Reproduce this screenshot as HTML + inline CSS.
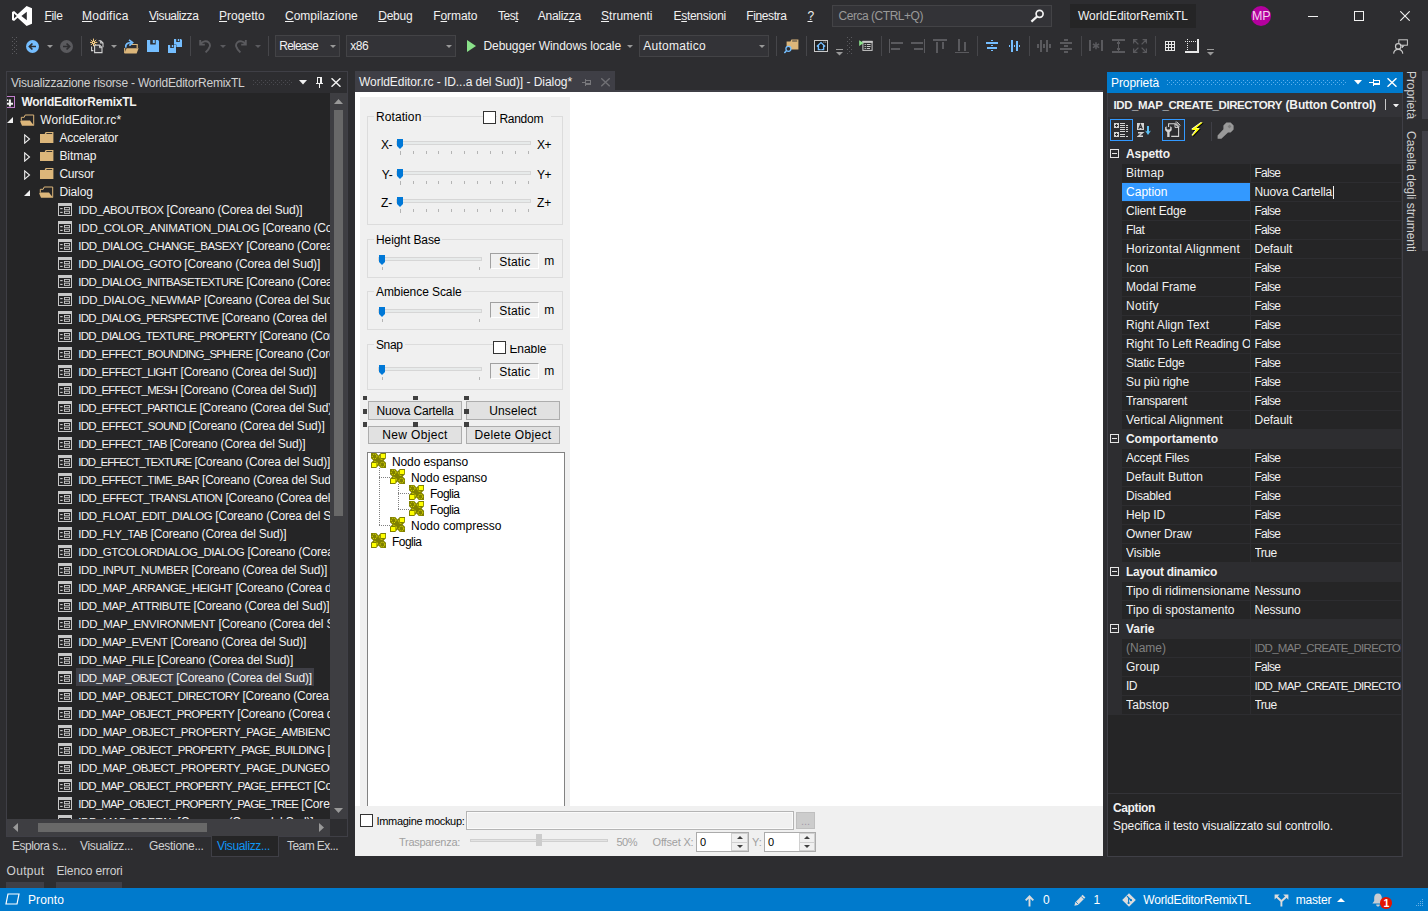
<!DOCTYPE html>
<html><head><meta charset="utf-8"><title>WorldEditorRemixTL</title><style>
html,body{margin:0;padding:0;}
body{width:1428px;height:911px;overflow:hidden;background:#2D2D30;font-family:"Liberation Sans",sans-serif;font-size:12px;position:relative;}
.a{position:absolute;}
.t{white-space:nowrap;}
u{text-decoration:underline;text-underline-offset:1px;}
</style></head><body>
<svg class="a" style="left:12px;top:6px;" width="20" height="20" viewBox="0 0 20 20"><path fill="#FFFFFF" fill-rule="evenodd" d="M14.6 0 L20 2.3 V17.7 L14.6 20 L5.6 11.8 L2.1 15.1 L0 14 V6 L2.1 4.9 L5.6 8.2 Z M14.8 5.8 L9.4 10 L14.8 14.2 Z M2 7.4 V12.6 L4.8 10 Z"/></svg>
<span class="a t" style="left:44.5px;top:7.0px;height:18px;line-height:18px;color:#F1F1F1;font-size:12px;letter-spacing:-0.340px;"><u>F</u>ile</span>
<span class="a t" style="left:82px;top:7.0px;height:18px;line-height:18px;color:#F1F1F1;font-size:12px;letter-spacing:0.264px;"><u>M</u>odifica</span>
<span class="a t" style="left:149px;top:7.0px;height:18px;line-height:18px;color:#F1F1F1;font-size:12px;letter-spacing:-0.443px;"><u>V</u>isualizza</span>
<span class="a t" style="left:219px;top:7.0px;height:18px;line-height:18px;color:#F1F1F1;font-size:12px;letter-spacing:0.041px;"><u>P</u>rogetto</span>
<span class="a t" style="left:285px;top:7.0px;height:18px;line-height:18px;color:#F1F1F1;font-size:12px;letter-spacing:0.007px;"><u>C</u>ompilazione</span>
<span class="a t" style="left:378.2px;top:7.0px;height:18px;line-height:18px;color:#F1F1F1;font-size:12px;letter-spacing:-0.215px;"><u>D</u>ebug</span>
<span class="a t" style="left:433.3px;top:7.0px;height:18px;line-height:18px;color:#F1F1F1;font-size:12px;letter-spacing:-0.103px;">F<u>o</u>rmato</span>
<span class="a t" style="left:498px;top:7.0px;height:18px;line-height:18px;color:#F1F1F1;font-size:12px;letter-spacing:-0.508px;">Tes<u>t</u></span>
<span class="a t" style="left:537.8px;top:7.0px;height:18px;line-height:18px;color:#F1F1F1;font-size:12px;letter-spacing:-0.272px;">Analiz<u>z</u>a</span>
<span class="a t" style="left:601px;top:7.0px;height:18px;line-height:18px;color:#F1F1F1;font-size:12px;letter-spacing:0.014px;"><u>S</u>trumenti</span>
<span class="a t" style="left:673.5px;top:7.0px;height:18px;line-height:18px;color:#F1F1F1;font-size:12px;letter-spacing:-0.289px;">E<u>s</u>tensioni</span>
<span class="a t" style="left:746.3px;top:7.0px;height:18px;line-height:18px;color:#F1F1F1;font-size:12px;letter-spacing:-0.397px;">Fi<u>n</u>estra</span>
<span class="a t" style="left:807.5px;top:7.0px;height:18px;line-height:18px;color:#F1F1F1;font-size:12px;letter-spacing:-1.688px;"><u>?</u></span>
<div class="a" style="left:832px;top:5px;width:220px;height:22px;background:#333337;border:1px solid #434346;box-sizing:border-box;"></div>
<span class="a t" style="left:838.5px;top:7.0px;height:18px;line-height:18px;color:#999999;font-size:12px;letter-spacing:-0.465px;">Cerca (CTRL+Q)</span>
<svg class="a" style="left:1030px;top:9px;" width="15" height="14" viewBox="0 0 15 14"><circle cx="9.6" cy="4.8" r="3.5" fill="none" stroke="#F1F1F1" stroke-width="1.7"/><path d="M7.2 7.4 L1.4 12.6" stroke="#F1F1F1" stroke-width="2.2" stroke-linecap="butt"/></svg>
<div class="a" style="left:1070px;top:4px;width:126px;height:24px;background:#252526;"></div>
<span class="a t" style="left:1078px;top:7.0px;height:18px;line-height:18px;color:#F1F1F1;font-size:12px;letter-spacing:-0.027px;">WorldEditorRemixTL</span>
<div class="a" style="left:1251px;top:6px;width:20px;height:20px;background:#B4009E;border-radius:10px;"></div>
<span class="a t" style="left:1252px;top:7.0px;height:18px;line-height:18px;color:#F3D2EC;font-size:12.5px;letter-spacing:-0.225px;">MP</span>
<div class="a" style="left:1308px;top:16px;width:10px;height:1px;background:#F1F1F1;"></div>
<div class="a" style="left:1354px;top:11px;width:10px;height:10px;border:1px solid #F1F1F1;box-sizing:border-box;"></div>
<svg class="a" style="left:1400px;top:11px;" width="10" height="10" viewBox="0 0 10 10"><path d="M0.3 0.3 L9.7 9.7 M9.7 0.3 L0.3 9.7" stroke="#F1F1F1" stroke-width="1.1"/></svg>
<svg class="a" style="left:12px;top:37px;" width="5" height="18" viewBox="0 0 5 18"><g fill="#5A5A5E"><rect x="0" y="0" width="1" height="1"/><rect x="4" y="0" width="1" height="1"/><rect x="2" y="2" width="1" height="1"/><rect x="0" y="4" width="1" height="1"/><rect x="4" y="4" width="1" height="1"/><rect x="2" y="6" width="1" height="1"/><rect x="0" y="8" width="1" height="1"/><rect x="4" y="8" width="1" height="1"/><rect x="2" y="10" width="1" height="1"/><rect x="0" y="12" width="1" height="1"/><rect x="4" y="12" width="1" height="1"/><rect x="2" y="14" width="1" height="1"/><rect x="0" y="16" width="1" height="1"/><rect x="4" y="16" width="1" height="1"/></g></svg>
<svg class="a" style="left:25.5px;top:39.5px;" width="13" height="13" viewBox="0 0 13 13"><circle cx="6.5" cy="6.5" r="6.5" fill="#75BEFF"/><path d="M10 6.5 H3.6 M6.4 3.5 L3.4 6.5 L6.4 9.5" stroke="#2D2D30" stroke-width="1.7" fill="none"/></svg>
<svg class="a" style="left:46.5px;top:45px;" width="6" height="3" viewBox="0 0 6 3"><path d="M0 0 H6 L3.0 3 Z" fill="#999999"/></svg>
<svg class="a" style="left:59.5px;top:39.5px;" width="13" height="13" viewBox="0 0 13 13"><circle cx="6.5" cy="6.5" r="6.5" fill="#5A5A5E"/><path d="M3 6.5 H9.4 M6.6 3.5 L9.6 6.5 L6.6 9.5" stroke="#2D2D30" stroke-width="1.7" fill="none"/></svg>
<div class="a" style="left:81px;top:36px;width:1px;height:20px;background:#46464A;"></div>
<svg class="a" style="left:90px;top:38px;" width="14" height="16" viewBox="0 0 14 16"><path d="M1.6 8.4 V12.6 H3.4 M8.6 2.7 H10.8 L13 4.9 V9.2 M10.7 2.9 V5 H12.8" fill="none" stroke="#D0D0D0" stroke-width="1.1"/><path d="M4.6 7.1 H9.6 L12 9.5 V14.6 H4.6 Z" fill="#38383C" stroke="#D0D0D0" stroke-width="1.1"/><path d="M9.5 7.3 V9.7 H11.8" fill="none" stroke="#D0D0D0" stroke-width="1"/><path d="M3.5 0.6 V8.2 M-0.3 4.4 H7.3 M0.9 1.8 L6.1 7 M6.1 1.8 L0.9 7" stroke="#F5CC84" stroke-width="1"/><circle cx="3.5" cy="4.4" r="1.6" fill="#F5CC84"/><circle cx="3.5" cy="4.4" r="0.6" fill="#2D2D30"/></svg>
<svg class="a" style="left:111px;top:45px;" width="6" height="3" viewBox="0 0 6 3"><path d="M0 0 H6 L3.0 3 Z" fill="#999999"/></svg>
<svg class="a" style="left:124px;top:39px;" width="15" height="15" viewBox="0 0 15 15"><path d="M0.7 9 V14 M7.4 5.5 H13.2 V9" fill="none" stroke="#DCB67A" stroke-width="1.2"/><path d="M2.6 9.2 H14.6 L12.6 14.4 H0.3 Z" fill="#DCB67A"/><path d="M1.8 8.6 C1.2 5.2 3.6 3.4 7.4 3.8" fill="none" stroke="#75BEFF" stroke-width="1.7"/><path d="M5 0.8 L8.6 3.6 L5.4 6.6" fill="none" stroke="#75BEFF" stroke-width="1.7"/></svg>
<svg class="a" style="left:147px;top:40px;" width="12" height="12" viewBox="0 0 12 12"><path d="M0 0 H11 L12 1 V12 H0 Z" fill="#75BEFF"/><rect x="3.2" y="0" width="5.5" height="4.5" fill="#2D2D30"/><rect x="5.8" y="0" width="2" height="3.1" fill="#75BEFF"/></svg>
<svg class="a" style="left:168px;top:39px;" width="14" height="14" viewBox="0 0 14 14"><path d="M6 0 H13 L14 1 V8 H6 Z" fill="#75BEFF"/><rect x="8.2" y="0" width="3.6" height="3" fill="#2D2D30"/><rect x="9.8" y="0" width="1.3" height="2.1" fill="#75BEFF"/><path d="M-0.4 5.6 H8.4 V14 H-0.4 Z" fill="#2D2D30"/><path d="M0 6 H8 V14 H0 Z" fill="#75BEFF"/><rect x="2.2" y="6" width="3.6" height="3" fill="#2D2D30"/><rect x="3.8" y="6" width="1.3" height="2.1" fill="#75BEFF"/></svg>
<div class="a" style="left:190px;top:36px;width:1px;height:20px;background:#46464A;"></div>
<svg class="a" style="left:198.5px;top:38.5px;" width="13" height="14" viewBox="0 0 13 14"><path d="M1.2 1 V5.6 H5.8 M1.6 5.2 C3.4 2.2 7.4 1.4 9.6 3.4 C12 5.6 11.4 8.8 6.6 13.4" fill="none" stroke="#5A5A5E" stroke-width="1.9"/></svg>
<svg class="a" style="left:220px;top:45px;" width="6" height="3" viewBox="0 0 6 3"><path d="M0 0 H6 L3.0 3 Z" fill="#5A5A5E"/></svg>
<svg class="a" style="left:233.5px;top:38.5px;" width="13" height="14" viewBox="0 0 13 14"><path d="M11.8 1 V5.6 H7.2 M11.4 5.2 C9.6 2.2 5.6 1.4 3.4 3.4 C1 5.6 1.6 8.8 6.4 13.4" fill="none" stroke="#5A5A5E" stroke-width="1.9"/></svg>
<svg class="a" style="left:255px;top:45px;" width="6" height="3" viewBox="0 0 6 3"><path d="M0 0 H6 L3.0 3 Z" fill="#5A5A5E"/></svg>
<div class="a" style="left:268px;top:36px;width:1px;height:20px;background:#46464A;"></div>
<div class="a" style="left:275px;top:35px;width:65px;height:22px;background:#333337;border:1px solid #434346;box-sizing:border-box;"></div>
<span class="a t" style="left:279.3px;top:37.0px;height:18px;line-height:18px;color:#F1F1F1;font-size:12px;letter-spacing:-0.790px;">Release</span>
<svg class="a" style="left:329.5px;top:45px;" width="6" height="3" viewBox="0 0 6 3"><path d="M0 0 H6 L3.0 3 Z" fill="#999999"/></svg>
<div class="a" style="left:346px;top:35px;width:110px;height:22px;background:#333337;border:1px solid #434346;box-sizing:border-box;"></div>
<span class="a t" style="left:350.3px;top:37.0px;height:18px;line-height:18px;color:#F1F1F1;font-size:12px;letter-spacing:-0.453px;">x86</span>
<svg class="a" style="left:445.5px;top:45px;" width="6" height="3" viewBox="0 0 6 3"><path d="M0 0 H6 L3.0 3 Z" fill="#999999"/></svg>
<svg class="a" style="left:466.5px;top:40px;" width="9" height="12" viewBox="0 0 9 12"><path d="M0 0 L9 6 L0 12 Z" fill="#8AE28A"/></svg>
<span class="a t" style="left:483.5px;top:37.0px;height:18px;line-height:18px;color:#F1F1F1;font-size:12px;letter-spacing:-0.083px;">Debugger Windows locale</span>
<svg class="a" style="left:627px;top:45px;" width="6" height="3" viewBox="0 0 6 3"><path d="M0 0 H6 L3.0 3 Z" fill="#999999"/></svg>
<div class="a" style="left:639px;top:35px;width:130px;height:22px;background:#333337;border:1px solid #434346;box-sizing:border-box;"></div>
<span class="a t" style="left:643.3px;top:37.0px;height:18px;line-height:18px;color:#F1F1F1;font-size:12px;letter-spacing:0.247px;">Automatico</span>
<svg class="a" style="left:758.5px;top:45px;" width="6" height="3" viewBox="0 0 6 3"><path d="M0 0 H6 L3.0 3 Z" fill="#999999"/></svg>
<div class="a" style="left:776px;top:36px;width:1px;height:20px;background:#46464A;"></div>
<svg class="a" style="left:784px;top:38.5px;" width="15" height="15" viewBox="0 0 15 15"><path d="M2.6 10.4 V2.6 H6.4 L7.4 0.4 H14.4 V10.4 Z" fill="#DCB67A"/><path d="M8.2 2 H13.2" stroke="#2D2D30" stroke-width="0.9"/><circle cx="4.4" cy="9.8" r="2.5" fill="#2D2D30" stroke="#75BEFF" stroke-width="1.3"/><path d="M2.6 11.6 L0.4 14" stroke="#75BEFF" stroke-width="1.5"/></svg>
<div class="a" style="left:806px;top:36px;width:1px;height:20px;background:#46464A;"></div>
<svg class="a" style="left:814px;top:40px;" width="14" height="12" viewBox="0 0 14 12"><rect x="0.5" y="0.5" width="13" height="11" fill="#1E1E1E" stroke="#C8C8C8" stroke-width="1"/><path d="M2.8 6.4 L7 2.6 L11.2 6.4 M4.4 5.6 V9.6 H9.6 V5.6" fill="none" stroke="#75BEFF" stroke-width="1.4"/><rect x="6.3" y="6.8" width="1.4" height="2.6" fill="#1E1E1E"/><rect x="9.4" y="1.6" width="1" height="1" fill="#C8C8C8"/><rect x="11.2" y="1.6" width="1" height="1" fill="#C8C8C8"/></svg>
<div class="a" style="left:836px;top:49px;width:7px;height:1px;background:#999999;"></div>
<svg class="a" style="left:836px;top:52px;" width="7" height="3.5" viewBox="0 0 7 3.5"><path d="M0 0 H7 L3.5 3.5 Z" fill="#999999"/></svg>
<svg class="a" style="left:847px;top:37px;" width="5" height="18" viewBox="0 0 5 18"><g fill="#5A5A5E"><rect x="0" y="0" width="1" height="1"/><rect x="4" y="0" width="1" height="1"/><rect x="2" y="2" width="1" height="1"/><rect x="0" y="4" width="1" height="1"/><rect x="4" y="4" width="1" height="1"/><rect x="2" y="6" width="1" height="1"/><rect x="0" y="8" width="1" height="1"/><rect x="4" y="8" width="1" height="1"/><rect x="2" y="10" width="1" height="1"/><rect x="0" y="12" width="1" height="1"/><rect x="4" y="12" width="1" height="1"/><rect x="2" y="14" width="1" height="1"/><rect x="0" y="16" width="1" height="1"/><rect x="4" y="16" width="1" height="1"/></g></svg>
<svg class="a" style="left:858.5px;top:40px;" width="14" height="11" viewBox="0 0 14 11"><rect x="3.9" y="1.4" width="9.2" height="9" fill="#2D2D30" stroke="#C8C8C8" stroke-width="1"/><rect x="3.4" y="0.9" width="10.2" height="2" fill="#C8C8C8"/><path d="M0.2 0.2 L4.6 3.1 L0.2 6 Z" fill="#8AE28A"/><path d="M5.6 4.5 H6.8 M7.8 4.5 H11.6 M5.6 6.5 H6.8 M7.8 6.5 H11.6 M5.6 8.5 H6.8 M7.8 8.5 H11" stroke="#C8C8C8" stroke-width="1"/></svg>
<div class="a" style="left:881px;top:36px;width:1px;height:20px;background:#46464A;"></div>
<svg class="a" style="left:889px;top:39px;" width="14" height="14" viewBox="0 0 14 14"><g fill="#5A5A5E" shape-rendering="crispEdges"><rect x="0" y="0" width="1" height="14"/><rect x="2" y="3" width="12" height="2"/><rect x="2" y="9" width="9" height="2"/></g></svg>
<svg class="a" style="left:911px;top:39px;" width="14" height="14" viewBox="0 0 14 14"><g fill="#5A5A5E" shape-rendering="crispEdges"><rect x="13" y="0" width="1" height="14"/><rect x="0" y="3" width="12" height="2"/><rect x="3" y="9" width="9" height="2"/></g></svg>
<svg class="a" style="left:933px;top:39px;" width="14" height="14" viewBox="0 0 14 14"><g fill="#5A5A5E" shape-rendering="crispEdges"><rect x="0" y="0" width="14" height="2"/><rect x="3" y="3" width="2" height="11"/><rect x="9" y="3" width="2" height="7"/></g></svg>
<svg class="a" style="left:955px;top:39px;" width="14" height="14" viewBox="0 0 14 14"><g fill="#5A5A5E" shape-rendering="crispEdges"><rect x="0" y="13" width="14" height="1"/><rect x="3" y="0" width="2" height="12"/><rect x="9" y="3" width="2" height="9"/></g></svg>
<div class="a" style="left:977px;top:36px;width:1px;height:20px;background:#46464A;"></div>
<svg class="a" style="left:986px;top:40px;" width="12" height="11" viewBox="0 0 12 11"><g fill="#75BEFF" shape-rendering="crispEdges"><rect x="5" y="0" width="2" height="1"/><rect x="0" y="2" width="12" height="2"/><rect x="5" y="5" width="2" height="1"/><rect x="1" y="7" width="10" height="2"/><rect x="5" y="10" width="2" height="1"/></g></svg>
<svg class="a" style="left:1009px;top:40px;" width="11" height="12" viewBox="0 0 11 12"><g fill="#75BEFF" shape-rendering="crispEdges"><rect x="2" y="0" width="2" height="12"/><rect x="7" y="1" width="2" height="10"/><rect x="0" y="5" width="1" height="2"/><rect x="5" y="5" width="1" height="2"/><rect x="10" y="5" width="1" height="2"/></g></svg>
<div class="a" style="left:1029px;top:36px;width:1px;height:20px;background:#46464A;"></div>
<svg class="a" style="left:1037px;top:40px;" width="14" height="12" viewBox="0 0 14 12"><g fill="#5A5A5E" shape-rendering="crispEdges"><rect x="0" y="4" width="2" height="4"/><rect x="3" y="0" width="2" height="12"/><rect x="6" y="4" width="2" height="4"/><rect x="9" y="0" width="2" height="12"/><rect x="12" y="4" width="2" height="4"/></g></svg>
<svg class="a" style="left:1060px;top:39px;" width="12" height="14" viewBox="0 0 12 14"><g fill="#5A5A5E" shape-rendering="crispEdges"><rect x="4" y="0" width="4" height="2"/><rect x="0" y="3" width="12" height="2"/><rect x="4" y="6" width="4" height="2"/><rect x="0" y="9" width="12" height="2"/><rect x="4" y="12" width="4" height="2"/></g></svg>
<div class="a" style="left:1081px;top:36px;width:1px;height:20px;background:#46464A;"></div>
<svg class="a" style="left:1089px;top:40px;" width="14" height="11" viewBox="0 0 14 11"><g fill="#5A5A5E" shape-rendering="crispEdges"><rect x="0" y="0" width="2" height="11"/><rect x="12" y="0" width="2" height="11"/></g></svg>
<svg class="a" style="left:1092px;top:42px;" width="8" height="8" viewBox="0 0 8 8"><path d="M4 0.3 V7.3 M0.9 2 L7.1 5.6 M7.1 2 L0.9 5.6" stroke="#5A5A5E" stroke-width="1.5"/></svg>
<svg class="a" style="left:1112px;top:39px;" width="13" height="14" viewBox="0 0 13 14"><g fill="#5A5A5E" shape-rendering="crispEdges"><rect x="0" y="0" width="13" height="2"/><rect x="0" y="12" width="13" height="2"/><rect x="6" y="2" width="1" height="10"/><rect x="5" y="3" width="3" height="2"/><rect x="5" y="9" width="3" height="2"/></g></svg>
<svg class="a" style="left:1133px;top:39px;" width="14" height="14" viewBox="0 0 14 14"><path d="M0.6 4.4 V0.6 H4.4 M9.6 0.6 H13.4 V4.4 M13.4 9.6 V13.4 H9.6 M4.4 13.4 H0.6 V9.6 M1 1 L5.4 5.4 M13 1 L8.6 5.4 M13 13 L8.6 8.6 M1 13 L5.4 8.6" stroke="#5A5A5E" fill="none" stroke-width="1.3"/></svg>
<div class="a" style="left:1155px;top:36px;width:1px;height:20px;background:#46464A;"></div>
<svg class="a" style="left:1165px;top:41px;" width="10" height="10" viewBox="0 0 10 10"><g fill="#E8E8E8" shape-rendering="crispEdges"><rect x="0" y="0" width="1" height="10"/><rect x="3" y="0" width="1" height="10"/><rect x="6" y="0" width="1" height="10"/><rect x="9" y="0" width="1" height="10"/><rect x="0" y="0" width="10" height="1"/><rect x="0" y="3" width="10" height="1"/><rect x="0" y="6" width="10" height="1"/><rect x="0" y="9" width="10" height="1"/></g></svg>
<svg class="a" style="left:1185px;top:39px;" width="14" height="14" viewBox="0 0 14 14"><g fill="#E8E8E8" shape-rendering="crispEdges"><rect x="12" y="0" width="2" height="14"/><rect x="0" y="12" width="14" height="2"/><rect x="0" y="2" width="1" height="1"/><rect x="2" y="2" width="1" height="1"/><rect x="4" y="2" width="1" height="1"/><rect x="6" y="2" width="1" height="1"/><rect x="8" y="2" width="1" height="1"/><rect x="10" y="2" width="1" height="1"/><rect x="2" y="0" width="1" height="1"/><rect x="2" y="2" width="1" height="1"/><rect x="2" y="4" width="1" height="1"/><rect x="2" y="6" width="1" height="1"/><rect x="2" y="8" width="1" height="1"/><rect x="2" y="10" width="1" height="1"/></g></svg>
<div class="a" style="left:1207px;top:49px;width:7px;height:1px;background:#999999;"></div>
<svg class="a" style="left:1207px;top:52px;" width="7" height="3.5" viewBox="0 0 7 3.5"><path d="M0 0 H7 L3.5 3.5 Z" fill="#999999"/></svg>
<svg class="a" style="left:1392.5px;top:38.5px;" width="15" height="15" viewBox="0 0 15 15"><rect x="5.8" y="0.8" width="8.6" height="5.4" fill="none" stroke="#C8C8C8" stroke-width="1"/><path d="M9 6.5 V9 L11.5 6.5" fill="#C8C8C8" stroke="#C8C8C8" stroke-width="0.6"/><circle cx="5.2" cy="7.4" r="2.7" fill="#2D2D30" stroke="#C8C8C8" stroke-width="1.2"/><path d="M0.6 14.6 C1 11.4 3 10.4 5.2 10.4 C7.4 10.4 9.4 11.4 9.8 14.6" fill="none" stroke="#C8C8C8" stroke-width="1.2"/></svg>
<div class="a" style="left:6px;top:71px;width:342px;height:786px;background:#252526;"></div>
<div class="a" style="left:6px;top:71px;width:342px;height:1px;background:#3F3F46;"></div>
<div class="a" style="left:6px;top:72px;width:342px;height:21px;background:#2D2D30;"></div>
<span class="a t" style="left:11px;top:74.0px;height:18px;line-height:18px;color:#D0D0D0;font-size:12px;letter-spacing:-0.216px;">Visualizzazione risorse - WorldEditorRemixTL</span>
<svg class="a" style="left:253px;top:80px;" width="40" height="5" viewBox="0 0 40 5"><g fill="#4A4A4F"><rect x="0" y="0" width="1" height="1"/><rect x="4" y="0" width="1" height="1"/><rect x="8" y="0" width="1" height="1"/><rect x="12" y="0" width="1" height="1"/><rect x="16" y="0" width="1" height="1"/><rect x="20" y="0" width="1" height="1"/><rect x="24" y="0" width="1" height="1"/><rect x="28" y="0" width="1" height="1"/><rect x="32" y="0" width="1" height="1"/><rect x="36" y="0" width="1" height="1"/><rect x="2" y="2" width="1" height="1"/><rect x="6" y="2" width="1" height="1"/><rect x="10" y="2" width="1" height="1"/><rect x="14" y="2" width="1" height="1"/><rect x="18" y="2" width="1" height="1"/><rect x="22" y="2" width="1" height="1"/><rect x="26" y="2" width="1" height="1"/><rect x="30" y="2" width="1" height="1"/><rect x="34" y="2" width="1" height="1"/><rect x="38" y="2" width="1" height="1"/><rect x="0" y="4" width="1" height="1"/><rect x="4" y="4" width="1" height="1"/><rect x="8" y="4" width="1" height="1"/><rect x="12" y="4" width="1" height="1"/><rect x="16" y="4" width="1" height="1"/><rect x="20" y="4" width="1" height="1"/><rect x="24" y="4" width="1" height="1"/><rect x="28" y="4" width="1" height="1"/><rect x="32" y="4" width="1" height="1"/><rect x="36" y="4" width="1" height="1"/></g></svg>
<svg class="a" style="left:299px;top:80px;" width="8" height="4.5" viewBox="0 0 8 4.5"><path d="M0 0 H8 L4 4.5 Z" fill="#F1F1F1"/></svg>
<svg class="a" style="left:316px;top:77px;" width="7" height="11" viewBox="0 0 7 11"><g fill="#F1F1F1" shape-rendering="crispEdges"><rect x="1" y="0" width="5" height="1"/><rect x="1" y="0" width="1" height="6"/><rect x="4" y="0" width="2" height="6"/><rect x="0" y="6" width="7" height="1"/><rect x="3" y="7" width="1" height="4"/></g></svg>
<svg class="a" style="left:331px;top:77.5px;" width="10" height="9" viewBox="0 0 10 9"><path d="M0.5 0.3 L9.5 8.7 M9.5 0.3 L0.5 8.7" stroke="#F1F1F1" stroke-width="1.5"/></svg>
<div class="a" style="left:6px;top:71px;width:1px;height:786px;background:#3F3F46;"></div>
<div class="a" style="left:7px;top:93px;width:323px;height:726px;overflow:hidden"><svg class="a" style="left:0px;top:3px" width="9" height="12" viewBox="0 0 9 12"><rect x="-3" y="0.5" width="10.5" height="11" fill="none" stroke="#C27FCE" stroke-width="1"/><path d="M2.9 3.4 V10.4 M0 7.8 H6" stroke="#F1F1F1" stroke-width="2"/><rect x="0" y="3.4" width="1.2" height="1.6" fill="#F1F1F1"/></svg><span class="a t" style="left:14.399999999999999px;top:0px;height:18px;line-height:18px;color:#F1F1F1;font-size:12px;font-weight:bold;letter-spacing:-0.22916666666666666px;">WorldEditorRemixTL</span><svg class="a" style="left:0px;top:24px" width="6" height="6" viewBox="0 0 6 6"><path d="M6 0 V6 H0 Z" fill="#F1F1F1"/></svg><svg class="a" style="left:13px;top:20.5px" width="15" height="12" viewBox="0 0 15 12"><path d="M1.3 6.5 V3.3 H4.2 L5.2 1 H13.7 V11.5" fill="none" stroke="#DCB67A" stroke-width="1"/><path d="M0.2 7.4 L0.9 6.4 H10 L14 11.7 H2 Z" fill="#DCB67A"/></svg><span class="a t" style="left:33.3px;top:18px;height:18px;line-height:18px;color:#F1F1F1;font-size:12px;letter-spacing:0.07250000000000038px;">WorldEditor.rc*</span><svg class="a" style="left:17.4px;top:40.5px" width="7" height="10" viewBox="0 0 7 10"><path d="M0.7 0.9 L5.5 5 L0.7 9.1 Z" fill="none" stroke="#F1F1F1" stroke-width="1.1"/></svg><svg class="a" style="left:32.8px;top:39px" width="14" height="11" viewBox="0 0 14 11"><path d="M0 2 H4.6 L5.6 0 H13.4 V11 H0 Z" fill="#DCB67A"/><path d="M6.4 1.5 H12.2" stroke="#252526" stroke-width="0.9" fill="none"/></svg><span class="a t" style="left:52.4px;top:36px;height:18px;line-height:18px;color:#F1F1F1;font-size:12px;letter-spacing:-0.18210227272727247px;">Accelerator</span><svg class="a" style="left:17.4px;top:58.5px" width="7" height="10" viewBox="0 0 7 10"><path d="M0.7 0.9 L5.5 5 L0.7 9.1 Z" fill="none" stroke="#F1F1F1" stroke-width="1.1"/></svg><svg class="a" style="left:32.8px;top:57px" width="14" height="11" viewBox="0 0 14 11"><path d="M0 2 H4.6 L5.6 0 H13.4 V11 H0 Z" fill="#DCB67A"/><path d="M6.4 1.5 H12.2" stroke="#252526" stroke-width="0.9" fill="none"/></svg><span class="a t" style="left:52.4px;top:54px;height:18px;line-height:18px;color:#F1F1F1;font-size:12px;letter-spacing:-0.059895833333333336px;">Bitmap</span><svg class="a" style="left:17.4px;top:76.5px" width="7" height="10" viewBox="0 0 7 10"><path d="M0.7 0.9 L5.5 5 L0.7 9.1 Z" fill="none" stroke="#F1F1F1" stroke-width="1.1"/></svg><svg class="a" style="left:32.8px;top:75px" width="14" height="11" viewBox="0 0 14 11"><path d="M0 2 H4.6 L5.6 0 H13.4 V11 H0 Z" fill="#DCB67A"/><path d="M6.4 1.5 H12.2" stroke="#252526" stroke-width="0.9" fill="none"/></svg><span class="a t" style="left:52.4px;top:72px;height:18px;line-height:18px;color:#F1F1F1;font-size:12px;letter-spacing:-0.20260416666666714px;">Cursor</span><svg class="a" style="left:17.4px;top:96.5px" width="6" height="6" viewBox="0 0 6 6"><path d="M6 0 V6 H0 Z" fill="#F1F1F1"/></svg><svg class="a" style="left:31.6px;top:92.5px" width="15" height="12" viewBox="0 0 15 12"><path d="M1.3 6.5 V3.3 H4.2 L5.2 1 H13.7 V11.5" fill="none" stroke="#DCB67A" stroke-width="1"/><path d="M0.2 7.4 L0.9 6.4 H10 L14 11.7 H2 Z" fill="#DCB67A"/></svg><span class="a t" style="left:52.4px;top:90px;height:18px;line-height:18px;color:#F1F1F1;font-size:12px;letter-spacing:-0.10520833333333357px;">Dialog</span><svg class="a" style="left:51px;top:110px" width="14" height="13" viewBox="0 0 14 13"><rect x="0.5" y="0.5" width="13" height="12" fill="none" stroke="#C8C8C8"/><rect x="0" y="0" width="14" height="3" fill="#C8C8C8"/><rect x="2.2" y="5" width="2.4" height="1.2" fill="#C8C8C8"/><rect x="6.5" y="4.5" width="5" height="2.2" fill="none" stroke="#C8C8C8" stroke-width="0.9"/><rect x="2.2" y="8.8" width="2.4" height="1.2" fill="#C8C8C8"/><rect x="6.5" y="8.2" width="5" height="2.2" fill="none" stroke="#C8C8C8" stroke-width="0.9"/></svg><span class="a t" style="left:71.3px;top:108px;height:18px;line-height:18px;color:#F1F1F1;white-space:pre"><span style="font-size:11.5px;letter-spacing:-0.413px">IDD_ABOUTBOX</span><span style="letter-spacing:-0.2px"> [Coreano (Corea del Sud)]</span></span><svg class="a" style="left:51px;top:128px" width="14" height="13" viewBox="0 0 14 13"><rect x="0.5" y="0.5" width="13" height="12" fill="none" stroke="#C8C8C8"/><rect x="0" y="0" width="14" height="3" fill="#C8C8C8"/><rect x="2.2" y="5" width="2.4" height="1.2" fill="#C8C8C8"/><rect x="6.5" y="4.5" width="5" height="2.2" fill="none" stroke="#C8C8C8" stroke-width="0.9"/><rect x="2.2" y="8.8" width="2.4" height="1.2" fill="#C8C8C8"/><rect x="6.5" y="8.2" width="5" height="2.2" fill="none" stroke="#C8C8C8" stroke-width="0.9"/></svg><span class="a t" style="left:71.3px;top:126px;height:18px;line-height:18px;color:#F1F1F1;white-space:pre"><span style="font-size:11.5px;letter-spacing:-0.201px">IDD_COLOR_ANIMATION_DIALOG</span><span style="letter-spacing:-0.2px"> [Coreano (Corea del Sud)]</span></span><svg class="a" style="left:51px;top:146px" width="14" height="13" viewBox="0 0 14 13"><rect x="0.5" y="0.5" width="13" height="12" fill="none" stroke="#C8C8C8"/><rect x="0" y="0" width="14" height="3" fill="#C8C8C8"/><rect x="2.2" y="5" width="2.4" height="1.2" fill="#C8C8C8"/><rect x="6.5" y="4.5" width="5" height="2.2" fill="none" stroke="#C8C8C8" stroke-width="0.9"/><rect x="2.2" y="8.8" width="2.4" height="1.2" fill="#C8C8C8"/><rect x="6.5" y="8.2" width="5" height="2.2" fill="none" stroke="#C8C8C8" stroke-width="0.9"/></svg><span class="a t" style="left:71.3px;top:144px;height:18px;line-height:18px;color:#F1F1F1;white-space:pre"><span style="font-size:11.5px;letter-spacing:-0.538px">IDD_DIALOG_CHANGE_BASEXY</span><span style="letter-spacing:-0.2px"> [Coreano (Corea del Sud)]</span></span><svg class="a" style="left:51px;top:164px" width="14" height="13" viewBox="0 0 14 13"><rect x="0.5" y="0.5" width="13" height="12" fill="none" stroke="#C8C8C8"/><rect x="0" y="0" width="14" height="3" fill="#C8C8C8"/><rect x="2.2" y="5" width="2.4" height="1.2" fill="#C8C8C8"/><rect x="6.5" y="4.5" width="5" height="2.2" fill="none" stroke="#C8C8C8" stroke-width="0.9"/><rect x="2.2" y="8.8" width="2.4" height="1.2" fill="#C8C8C8"/><rect x="6.5" y="8.2" width="5" height="2.2" fill="none" stroke="#C8C8C8" stroke-width="0.9"/></svg><span class="a t" style="left:71.3px;top:162px;height:18px;line-height:18px;color:#F1F1F1;white-space:pre"><span style="font-size:11.5px;letter-spacing:-0.457px">IDD_DIALOG_GOTO</span><span style="letter-spacing:-0.2px"> [Coreano (Corea del Sud)]</span></span><svg class="a" style="left:51px;top:182px" width="14" height="13" viewBox="0 0 14 13"><rect x="0.5" y="0.5" width="13" height="12" fill="none" stroke="#C8C8C8"/><rect x="0" y="0" width="14" height="3" fill="#C8C8C8"/><rect x="2.2" y="5" width="2.4" height="1.2" fill="#C8C8C8"/><rect x="6.5" y="4.5" width="5" height="2.2" fill="none" stroke="#C8C8C8" stroke-width="0.9"/><rect x="2.2" y="8.8" width="2.4" height="1.2" fill="#C8C8C8"/><rect x="6.5" y="8.2" width="5" height="2.2" fill="none" stroke="#C8C8C8" stroke-width="0.9"/></svg><span class="a t" style="left:71.3px;top:180px;height:18px;line-height:18px;color:#F1F1F1;white-space:pre"><span style="font-size:11.5px;letter-spacing:-0.668px">IDD_DIALOG_INITBASETEXTURE</span><span style="letter-spacing:-0.2px"> [Coreano (Corea del Sud)]</span></span><svg class="a" style="left:51px;top:200px" width="14" height="13" viewBox="0 0 14 13"><rect x="0.5" y="0.5" width="13" height="12" fill="none" stroke="#C8C8C8"/><rect x="0" y="0" width="14" height="3" fill="#C8C8C8"/><rect x="2.2" y="5" width="2.4" height="1.2" fill="#C8C8C8"/><rect x="6.5" y="4.5" width="5" height="2.2" fill="none" stroke="#C8C8C8" stroke-width="0.9"/><rect x="2.2" y="8.8" width="2.4" height="1.2" fill="#C8C8C8"/><rect x="6.5" y="8.2" width="5" height="2.2" fill="none" stroke="#C8C8C8" stroke-width="0.9"/></svg><span class="a t" style="left:71.3px;top:198px;height:18px;line-height:18px;color:#F1F1F1;white-space:pre"><span style="font-size:11.5px;letter-spacing:-0.309px">IDD_DIALOG_NEWMAP</span><span style="letter-spacing:-0.2px"> [Coreano (Corea del Sud)]</span></span><svg class="a" style="left:51px;top:218px" width="14" height="13" viewBox="0 0 14 13"><rect x="0.5" y="0.5" width="13" height="12" fill="none" stroke="#C8C8C8"/><rect x="0" y="0" width="14" height="3" fill="#C8C8C8"/><rect x="2.2" y="5" width="2.4" height="1.2" fill="#C8C8C8"/><rect x="6.5" y="4.5" width="5" height="2.2" fill="none" stroke="#C8C8C8" stroke-width="0.9"/><rect x="2.2" y="8.8" width="2.4" height="1.2" fill="#C8C8C8"/><rect x="6.5" y="8.2" width="5" height="2.2" fill="none" stroke="#C8C8C8" stroke-width="0.9"/></svg><span class="a t" style="left:71.3px;top:216px;height:18px;line-height:18px;color:#F1F1F1;white-space:pre"><span style="font-size:11.5px;letter-spacing:-0.742px">IDD_DIALOG_PERSPECTIVE</span><span style="letter-spacing:-0.2px"> [Coreano (Corea del Sud)]</span></span><svg class="a" style="left:51px;top:236px" width="14" height="13" viewBox="0 0 14 13"><rect x="0.5" y="0.5" width="13" height="12" fill="none" stroke="#C8C8C8"/><rect x="0" y="0" width="14" height="3" fill="#C8C8C8"/><rect x="2.2" y="5" width="2.4" height="1.2" fill="#C8C8C8"/><rect x="6.5" y="4.5" width="5" height="2.2" fill="none" stroke="#C8C8C8" stroke-width="0.9"/><rect x="2.2" y="8.8" width="2.4" height="1.2" fill="#C8C8C8"/><rect x="6.5" y="8.2" width="5" height="2.2" fill="none" stroke="#C8C8C8" stroke-width="0.9"/></svg><span class="a t" style="left:71.3px;top:234px;height:18px;line-height:18px;color:#F1F1F1;white-space:pre"><span style="font-size:11.5px;letter-spacing:-0.783px">IDD_DIALOG_TEXTURE_PROPERTY</span><span style="letter-spacing:-0.2px"> [Coreano (Corea del Sud)]</span></span><svg class="a" style="left:51px;top:254px" width="14" height="13" viewBox="0 0 14 13"><rect x="0.5" y="0.5" width="13" height="12" fill="none" stroke="#C8C8C8"/><rect x="0" y="0" width="14" height="3" fill="#C8C8C8"/><rect x="2.2" y="5" width="2.4" height="1.2" fill="#C8C8C8"/><rect x="6.5" y="4.5" width="5" height="2.2" fill="none" stroke="#C8C8C8" stroke-width="0.9"/><rect x="2.2" y="8.8" width="2.4" height="1.2" fill="#C8C8C8"/><rect x="6.5" y="8.2" width="5" height="2.2" fill="none" stroke="#C8C8C8" stroke-width="0.9"/></svg><span class="a t" style="left:71.3px;top:252px;height:18px;line-height:18px;color:#F1F1F1;white-space:pre"><span style="font-size:11.5px;letter-spacing:-0.728px">IDD_EFFECT_BOUNDING_SPHERE</span><span style="letter-spacing:-0.2px"> [Coreano (Corea del Sud)]</span></span><svg class="a" style="left:51px;top:272px" width="14" height="13" viewBox="0 0 14 13"><rect x="0.5" y="0.5" width="13" height="12" fill="none" stroke="#C8C8C8"/><rect x="0" y="0" width="14" height="3" fill="#C8C8C8"/><rect x="2.2" y="5" width="2.4" height="1.2" fill="#C8C8C8"/><rect x="6.5" y="4.5" width="5" height="2.2" fill="none" stroke="#C8C8C8" stroke-width="0.9"/><rect x="2.2" y="8.8" width="2.4" height="1.2" fill="#C8C8C8"/><rect x="6.5" y="8.2" width="5" height="2.2" fill="none" stroke="#C8C8C8" stroke-width="0.9"/></svg><span class="a t" style="left:71.3px;top:270px;height:18px;line-height:18px;color:#F1F1F1;white-space:pre"><span style="font-size:11.5px;letter-spacing:-0.758px">IDD_EFFECT_LIGHT</span><span style="letter-spacing:-0.2px"> [Coreano (Corea del Sud)]</span></span><svg class="a" style="left:51px;top:290px" width="14" height="13" viewBox="0 0 14 13"><rect x="0.5" y="0.5" width="13" height="12" fill="none" stroke="#C8C8C8"/><rect x="0" y="0" width="14" height="3" fill="#C8C8C8"/><rect x="2.2" y="5" width="2.4" height="1.2" fill="#C8C8C8"/><rect x="6.5" y="4.5" width="5" height="2.2" fill="none" stroke="#C8C8C8" stroke-width="0.9"/><rect x="2.2" y="8.8" width="2.4" height="1.2" fill="#C8C8C8"/><rect x="6.5" y="8.2" width="5" height="2.2" fill="none" stroke="#C8C8C8" stroke-width="0.9"/></svg><span class="a t" style="left:71.3px;top:288px;height:18px;line-height:18px;color:#F1F1F1;white-space:pre"><span style="font-size:11.5px;letter-spacing:-0.766px">IDD_EFFECT_MESH</span><span style="letter-spacing:-0.2px"> [Coreano (Corea del Sud)]</span></span><svg class="a" style="left:51px;top:308px" width="14" height="13" viewBox="0 0 14 13"><rect x="0.5" y="0.5" width="13" height="12" fill="none" stroke="#C8C8C8"/><rect x="0" y="0" width="14" height="3" fill="#C8C8C8"/><rect x="2.2" y="5" width="2.4" height="1.2" fill="#C8C8C8"/><rect x="6.5" y="4.5" width="5" height="2.2" fill="none" stroke="#C8C8C8" stroke-width="0.9"/><rect x="2.2" y="8.8" width="2.4" height="1.2" fill="#C8C8C8"/><rect x="6.5" y="8.2" width="5" height="2.2" fill="none" stroke="#C8C8C8" stroke-width="0.9"/></svg><span class="a t" style="left:71.3px;top:306px;height:18px;line-height:18px;color:#F1F1F1;white-space:pre"><span style="font-size:11.5px;letter-spacing:-0.765px">IDD_EFFECT_PARTICLE</span><span style="letter-spacing:-0.2px"> [Coreano (Corea del Sud)]</span></span><svg class="a" style="left:51px;top:326px" width="14" height="13" viewBox="0 0 14 13"><rect x="0.5" y="0.5" width="13" height="12" fill="none" stroke="#C8C8C8"/><rect x="0" y="0" width="14" height="3" fill="#C8C8C8"/><rect x="2.2" y="5" width="2.4" height="1.2" fill="#C8C8C8"/><rect x="6.5" y="4.5" width="5" height="2.2" fill="none" stroke="#C8C8C8" stroke-width="0.9"/><rect x="2.2" y="8.8" width="2.4" height="1.2" fill="#C8C8C8"/><rect x="6.5" y="8.2" width="5" height="2.2" fill="none" stroke="#C8C8C8" stroke-width="0.9"/></svg><span class="a t" style="left:71.3px;top:324px;height:18px;line-height:18px;color:#F1F1F1;white-space:pre"><span style="font-size:11.5px;letter-spacing:-0.719px">IDD_EFFECT_SOUND</span><span style="letter-spacing:-0.2px"> [Coreano (Corea del Sud)]</span></span><svg class="a" style="left:51px;top:344px" width="14" height="13" viewBox="0 0 14 13"><rect x="0.5" y="0.5" width="13" height="12" fill="none" stroke="#C8C8C8"/><rect x="0" y="0" width="14" height="3" fill="#C8C8C8"/><rect x="2.2" y="5" width="2.4" height="1.2" fill="#C8C8C8"/><rect x="6.5" y="4.5" width="5" height="2.2" fill="none" stroke="#C8C8C8" stroke-width="0.9"/><rect x="2.2" y="8.8" width="2.4" height="1.2" fill="#C8C8C8"/><rect x="6.5" y="8.2" width="5" height="2.2" fill="none" stroke="#C8C8C8" stroke-width="0.9"/></svg><span class="a t" style="left:71.3px;top:342px;height:18px;line-height:18px;color:#F1F1F1;white-space:pre"><span style="font-size:11.5px;letter-spacing:-0.755px">IDD_EFFECT_TAB</span><span style="letter-spacing:-0.2px"> [Coreano (Corea del Sud)]</span></span><svg class="a" style="left:51px;top:362px" width="14" height="13" viewBox="0 0 14 13"><rect x="0.5" y="0.5" width="13" height="12" fill="none" stroke="#C8C8C8"/><rect x="0" y="0" width="14" height="3" fill="#C8C8C8"/><rect x="2.2" y="5" width="2.4" height="1.2" fill="#C8C8C8"/><rect x="6.5" y="4.5" width="5" height="2.2" fill="none" stroke="#C8C8C8" stroke-width="0.9"/><rect x="2.2" y="8.8" width="2.4" height="1.2" fill="#C8C8C8"/><rect x="6.5" y="8.2" width="5" height="2.2" fill="none" stroke="#C8C8C8" stroke-width="0.9"/></svg><span class="a t" style="left:71.3px;top:360px;height:18px;line-height:18px;color:#F1F1F1;white-space:pre"><span style="font-size:11.5px;letter-spacing:-1.002px">IDD_EFFECT_TEXTURE</span><span style="letter-spacing:-0.2px"> [Coreano (Corea del Sud)]</span></span><svg class="a" style="left:51px;top:380px" width="14" height="13" viewBox="0 0 14 13"><rect x="0.5" y="0.5" width="13" height="12" fill="none" stroke="#C8C8C8"/><rect x="0" y="0" width="14" height="3" fill="#C8C8C8"/><rect x="2.2" y="5" width="2.4" height="1.2" fill="#C8C8C8"/><rect x="6.5" y="4.5" width="5" height="2.2" fill="none" stroke="#C8C8C8" stroke-width="0.9"/><rect x="2.2" y="8.8" width="2.4" height="1.2" fill="#C8C8C8"/><rect x="6.5" y="8.2" width="5" height="2.2" fill="none" stroke="#C8C8C8" stroke-width="0.9"/></svg><span class="a t" style="left:71.3px;top:378px;height:18px;line-height:18px;color:#F1F1F1;white-space:pre"><span style="font-size:11.5px;letter-spacing:-0.751px">IDD_EFFECT_TIME_BAR</span><span style="letter-spacing:-0.2px"> [Coreano (Corea del Sud)]</span></span><svg class="a" style="left:51px;top:398px" width="14" height="13" viewBox="0 0 14 13"><rect x="0.5" y="0.5" width="13" height="12" fill="none" stroke="#C8C8C8"/><rect x="0" y="0" width="14" height="3" fill="#C8C8C8"/><rect x="2.2" y="5" width="2.4" height="1.2" fill="#C8C8C8"/><rect x="6.5" y="4.5" width="5" height="2.2" fill="none" stroke="#C8C8C8" stroke-width="0.9"/><rect x="2.2" y="8.8" width="2.4" height="1.2" fill="#C8C8C8"/><rect x="6.5" y="8.2" width="5" height="2.2" fill="none" stroke="#C8C8C8" stroke-width="0.9"/></svg><span class="a t" style="left:71.3px;top:396px;height:18px;line-height:18px;color:#F1F1F1;white-space:pre"><span style="font-size:11.5px;letter-spacing:-0.592px">IDD_EFFECT_TRANSLATION</span><span style="letter-spacing:-0.2px"> [Coreano (Corea del Sud)]</span></span><svg class="a" style="left:51px;top:416px" width="14" height="13" viewBox="0 0 14 13"><rect x="0.5" y="0.5" width="13" height="12" fill="none" stroke="#C8C8C8"/><rect x="0" y="0" width="14" height="3" fill="#C8C8C8"/><rect x="2.2" y="5" width="2.4" height="1.2" fill="#C8C8C8"/><rect x="6.5" y="4.5" width="5" height="2.2" fill="none" stroke="#C8C8C8" stroke-width="0.9"/><rect x="2.2" y="8.8" width="2.4" height="1.2" fill="#C8C8C8"/><rect x="6.5" y="8.2" width="5" height="2.2" fill="none" stroke="#C8C8C8" stroke-width="0.9"/></svg><span class="a t" style="left:71.3px;top:414px;height:18px;line-height:18px;color:#F1F1F1;white-space:pre"><span style="font-size:11.5px;letter-spacing:-0.524px">IDD_FLOAT_EDIT_DIALOG</span><span style="letter-spacing:-0.2px"> [Coreano (Corea del Sud)]</span></span><svg class="a" style="left:51px;top:434px" width="14" height="13" viewBox="0 0 14 13"><rect x="0.5" y="0.5" width="13" height="12" fill="none" stroke="#C8C8C8"/><rect x="0" y="0" width="14" height="3" fill="#C8C8C8"/><rect x="2.2" y="5" width="2.4" height="1.2" fill="#C8C8C8"/><rect x="6.5" y="4.5" width="5" height="2.2" fill="none" stroke="#C8C8C8" stroke-width="0.9"/><rect x="2.2" y="8.8" width="2.4" height="1.2" fill="#C8C8C8"/><rect x="6.5" y="8.2" width="5" height="2.2" fill="none" stroke="#C8C8C8" stroke-width="0.9"/></svg><span class="a t" style="left:71.3px;top:432px;height:18px;line-height:18px;color:#F1F1F1;white-space:pre"><span style="font-size:11.5px;letter-spacing:-0.464px">IDD_FLY_TAB</span><span style="letter-spacing:-0.2px"> [Coreano (Corea del Sud)]</span></span><svg class="a" style="left:51px;top:452px" width="14" height="13" viewBox="0 0 14 13"><rect x="0.5" y="0.5" width="13" height="12" fill="none" stroke="#C8C8C8"/><rect x="0" y="0" width="14" height="3" fill="#C8C8C8"/><rect x="2.2" y="5" width="2.4" height="1.2" fill="#C8C8C8"/><rect x="6.5" y="4.5" width="5" height="2.2" fill="none" stroke="#C8C8C8" stroke-width="0.9"/><rect x="2.2" y="8.8" width="2.4" height="1.2" fill="#C8C8C8"/><rect x="6.5" y="8.2" width="5" height="2.2" fill="none" stroke="#C8C8C8" stroke-width="0.9"/></svg><span class="a t" style="left:71.3px;top:450px;height:18px;line-height:18px;color:#F1F1F1;white-space:pre"><span style="font-size:11.5px;letter-spacing:-0.434px">IDD_GTCOLORDIALOG_DIALOG</span><span style="letter-spacing:-0.2px"> [Coreano (Corea del Sud)]</span></span><svg class="a" style="left:51px;top:470px" width="14" height="13" viewBox="0 0 14 13"><rect x="0.5" y="0.5" width="13" height="12" fill="none" stroke="#C8C8C8"/><rect x="0" y="0" width="14" height="3" fill="#C8C8C8"/><rect x="2.2" y="5" width="2.4" height="1.2" fill="#C8C8C8"/><rect x="6.5" y="4.5" width="5" height="2.2" fill="none" stroke="#C8C8C8" stroke-width="0.9"/><rect x="2.2" y="8.8" width="2.4" height="1.2" fill="#C8C8C8"/><rect x="6.5" y="8.2" width="5" height="2.2" fill="none" stroke="#C8C8C8" stroke-width="0.9"/></svg><span class="a t" style="left:71.3px;top:468px;height:18px;line-height:18px;color:#F1F1F1;white-space:pre"><span style="font-size:11.5px;letter-spacing:-0.436px">IDD_INPUT_NUMBER</span><span style="letter-spacing:-0.2px"> [Coreano (Corea del Sud)]</span></span><svg class="a" style="left:51px;top:488px" width="14" height="13" viewBox="0 0 14 13"><rect x="0.5" y="0.5" width="13" height="12" fill="none" stroke="#C8C8C8"/><rect x="0" y="0" width="14" height="3" fill="#C8C8C8"/><rect x="2.2" y="5" width="2.4" height="1.2" fill="#C8C8C8"/><rect x="6.5" y="4.5" width="5" height="2.2" fill="none" stroke="#C8C8C8" stroke-width="0.9"/><rect x="2.2" y="8.8" width="2.4" height="1.2" fill="#C8C8C8"/><rect x="6.5" y="8.2" width="5" height="2.2" fill="none" stroke="#C8C8C8" stroke-width="0.9"/></svg><span class="a t" style="left:71.3px;top:486px;height:18px;line-height:18px;color:#F1F1F1;white-space:pre"><span style="font-size:11.5px;letter-spacing:-0.463px">IDD_MAP_ARRANGE_HEIGHT</span><span style="letter-spacing:-0.2px"> [Coreano (Corea del Sud)]</span></span><svg class="a" style="left:51px;top:506px" width="14" height="13" viewBox="0 0 14 13"><rect x="0.5" y="0.5" width="13" height="12" fill="none" stroke="#C8C8C8"/><rect x="0" y="0" width="14" height="3" fill="#C8C8C8"/><rect x="2.2" y="5" width="2.4" height="1.2" fill="#C8C8C8"/><rect x="6.5" y="4.5" width="5" height="2.2" fill="none" stroke="#C8C8C8" stroke-width="0.9"/><rect x="2.2" y="8.8" width="2.4" height="1.2" fill="#C8C8C8"/><rect x="6.5" y="8.2" width="5" height="2.2" fill="none" stroke="#C8C8C8" stroke-width="0.9"/></svg><span class="a t" style="left:71.3px;top:504px;height:18px;line-height:18px;color:#F1F1F1;white-space:pre"><span style="font-size:11.5px;letter-spacing:-0.494px">IDD_MAP_ATTRIBUTE</span><span style="letter-spacing:-0.2px"> [Coreano (Corea del Sud)]</span></span><svg class="a" style="left:51px;top:524px" width="14" height="13" viewBox="0 0 14 13"><rect x="0.5" y="0.5" width="13" height="12" fill="none" stroke="#C8C8C8"/><rect x="0" y="0" width="14" height="3" fill="#C8C8C8"/><rect x="2.2" y="5" width="2.4" height="1.2" fill="#C8C8C8"/><rect x="6.5" y="4.5" width="5" height="2.2" fill="none" stroke="#C8C8C8" stroke-width="0.9"/><rect x="2.2" y="8.8" width="2.4" height="1.2" fill="#C8C8C8"/><rect x="6.5" y="8.2" width="5" height="2.2" fill="none" stroke="#C8C8C8" stroke-width="0.9"/></svg><span class="a t" style="left:71.3px;top:522px;height:18px;line-height:18px;color:#F1F1F1;white-space:pre"><span style="font-size:11.5px;letter-spacing:-0.292px">IDD_MAP_ENVIRONMENT</span><span style="letter-spacing:-0.2px"> [Coreano (Corea del Sud)]</span></span><svg class="a" style="left:51px;top:542px" width="14" height="13" viewBox="0 0 14 13"><rect x="0.5" y="0.5" width="13" height="12" fill="none" stroke="#C8C8C8"/><rect x="0" y="0" width="14" height="3" fill="#C8C8C8"/><rect x="2.2" y="5" width="2.4" height="1.2" fill="#C8C8C8"/><rect x="6.5" y="4.5" width="5" height="2.2" fill="none" stroke="#C8C8C8" stroke-width="0.9"/><rect x="2.2" y="8.8" width="2.4" height="1.2" fill="#C8C8C8"/><rect x="6.5" y="8.2" width="5" height="2.2" fill="none" stroke="#C8C8C8" stroke-width="0.9"/></svg><span class="a t" style="left:71.3px;top:540px;height:18px;line-height:18px;color:#F1F1F1;white-space:pre"><span style="font-size:11.5px;letter-spacing:-0.531px">IDD_MAP_EVENT</span><span style="letter-spacing:-0.2px"> [Coreano (Corea del Sud)]</span></span><svg class="a" style="left:51px;top:560px" width="14" height="13" viewBox="0 0 14 13"><rect x="0.5" y="0.5" width="13" height="12" fill="none" stroke="#C8C8C8"/><rect x="0" y="0" width="14" height="3" fill="#C8C8C8"/><rect x="2.2" y="5" width="2.4" height="1.2" fill="#C8C8C8"/><rect x="6.5" y="4.5" width="5" height="2.2" fill="none" stroke="#C8C8C8" stroke-width="0.9"/><rect x="2.2" y="8.8" width="2.4" height="1.2" fill="#C8C8C8"/><rect x="6.5" y="8.2" width="5" height="2.2" fill="none" stroke="#C8C8C8" stroke-width="0.9"/></svg><span class="a t" style="left:71.3px;top:558px;height:18px;line-height:18px;color:#F1F1F1;white-space:pre"><span style="font-size:11.5px;letter-spacing:-0.496px">IDD_MAP_FILE</span><span style="letter-spacing:-0.2px"> [Coreano (Corea del Sud)]</span></span><div class="a" style="left:69px;top:575px;width:238px;height:18px;background:#3F3F46"></div><svg class="a" style="left:51px;top:578px" width="14" height="13" viewBox="0 0 14 13"><rect x="0.5" y="0.5" width="13" height="12" fill="none" stroke="#C8C8C8"/><rect x="0" y="0" width="14" height="3" fill="#C8C8C8"/><rect x="2.2" y="5" width="2.4" height="1.2" fill="#C8C8C8"/><rect x="6.5" y="4.5" width="5" height="2.2" fill="none" stroke="#C8C8C8" stroke-width="0.9"/><rect x="2.2" y="8.8" width="2.4" height="1.2" fill="#C8C8C8"/><rect x="6.5" y="8.2" width="5" height="2.2" fill="none" stroke="#C8C8C8" stroke-width="0.9"/></svg><span class="a t" style="left:71.3px;top:576px;height:18px;line-height:18px;color:#F1F1F1;white-space:pre"><span style="font-size:11.5px;letter-spacing:-0.581px">IDD_MAP_OBJECT</span><span style="letter-spacing:-0.2px"> [Coreano (Corea del Sud)]</span></span><svg class="a" style="left:51px;top:596px" width="14" height="13" viewBox="0 0 14 13"><rect x="0.5" y="0.5" width="13" height="12" fill="none" stroke="#C8C8C8"/><rect x="0" y="0" width="14" height="3" fill="#C8C8C8"/><rect x="2.2" y="5" width="2.4" height="1.2" fill="#C8C8C8"/><rect x="6.5" y="4.5" width="5" height="2.2" fill="none" stroke="#C8C8C8" stroke-width="0.9"/><rect x="2.2" y="8.8" width="2.4" height="1.2" fill="#C8C8C8"/><rect x="6.5" y="8.2" width="5" height="2.2" fill="none" stroke="#C8C8C8" stroke-width="0.9"/></svg><span class="a t" style="left:71.3px;top:594px;height:18px;line-height:18px;color:#F1F1F1;white-space:pre"><span style="font-size:11.5px;letter-spacing:-0.652px">IDD_MAP_OBJECT_DIRECTORY</span><span style="letter-spacing:-0.2px"> [Coreano (Corea del Sud)]</span></span><svg class="a" style="left:51px;top:614px" width="14" height="13" viewBox="0 0 14 13"><rect x="0.5" y="0.5" width="13" height="12" fill="none" stroke="#C8C8C8"/><rect x="0" y="0" width="14" height="3" fill="#C8C8C8"/><rect x="2.2" y="5" width="2.4" height="1.2" fill="#C8C8C8"/><rect x="6.5" y="4.5" width="5" height="2.2" fill="none" stroke="#C8C8C8" stroke-width="0.9"/><rect x="2.2" y="8.8" width="2.4" height="1.2" fill="#C8C8C8"/><rect x="6.5" y="8.2" width="5" height="2.2" fill="none" stroke="#C8C8C8" stroke-width="0.9"/></svg><span class="a t" style="left:71.3px;top:612px;height:18px;line-height:18px;color:#F1F1F1;white-space:pre"><span style="font-size:11.5px;letter-spacing:-0.717px">IDD_MAP_OBJECT_PROPERTY</span><span style="letter-spacing:-0.2px"> [Coreano (Corea del Sud)]</span></span><svg class="a" style="left:51px;top:632px" width="14" height="13" viewBox="0 0 14 13"><rect x="0.5" y="0.5" width="13" height="12" fill="none" stroke="#C8C8C8"/><rect x="0" y="0" width="14" height="3" fill="#C8C8C8"/><rect x="2.2" y="5" width="2.4" height="1.2" fill="#C8C8C8"/><rect x="6.5" y="4.5" width="5" height="2.2" fill="none" stroke="#C8C8C8" stroke-width="0.9"/><rect x="2.2" y="8.8" width="2.4" height="1.2" fill="#C8C8C8"/><rect x="6.5" y="8.2" width="5" height="2.2" fill="none" stroke="#C8C8C8" stroke-width="0.9"/></svg><span class="a t" style="left:71.3px;top:630px;height:18px;line-height:18px;color:#F1F1F1;white-space:pre"><span style="font-size:11.5px;letter-spacing:-0.450px">IDD_MAP_OBJECT_PROPERTY_PAGE_AMBIENCE</span><span style="letter-spacing:-0.2px"> [Coreano (Corea del Sud)]</span></span><svg class="a" style="left:51px;top:650px" width="14" height="13" viewBox="0 0 14 13"><rect x="0.5" y="0.5" width="13" height="12" fill="none" stroke="#C8C8C8"/><rect x="0" y="0" width="14" height="3" fill="#C8C8C8"/><rect x="2.2" y="5" width="2.4" height="1.2" fill="#C8C8C8"/><rect x="6.5" y="4.5" width="5" height="2.2" fill="none" stroke="#C8C8C8" stroke-width="0.9"/><rect x="2.2" y="8.8" width="2.4" height="1.2" fill="#C8C8C8"/><rect x="6.5" y="8.2" width="5" height="2.2" fill="none" stroke="#C8C8C8" stroke-width="0.9"/></svg><span class="a t" style="left:71.3px;top:648px;height:18px;line-height:18px;color:#F1F1F1;white-space:pre"><span style="font-size:11.5px;letter-spacing:-0.662px">IDD_MAP_OBJECT_PROPERTY_PAGE_BUILDING</span><span style="letter-spacing:-0.2px"> [Coreano (Corea del Sud)]</span></span><svg class="a" style="left:51px;top:668px" width="14" height="13" viewBox="0 0 14 13"><rect x="0.5" y="0.5" width="13" height="12" fill="none" stroke="#C8C8C8"/><rect x="0" y="0" width="14" height="3" fill="#C8C8C8"/><rect x="2.2" y="5" width="2.4" height="1.2" fill="#C8C8C8"/><rect x="6.5" y="4.5" width="5" height="2.2" fill="none" stroke="#C8C8C8" stroke-width="0.9"/><rect x="2.2" y="8.8" width="2.4" height="1.2" fill="#C8C8C8"/><rect x="6.5" y="8.2" width="5" height="2.2" fill="none" stroke="#C8C8C8" stroke-width="0.9"/></svg><span class="a t" style="left:71.3px;top:666px;height:18px;line-height:18px;color:#F1F1F1;white-space:pre"><span style="font-size:11.5px;letter-spacing:-0.450px">IDD_MAP_OBJECT_PROPERTY_PAGE_DUNGEON</span><span style="letter-spacing:-0.2px"> [Coreano (Corea del Sud)]</span></span><svg class="a" style="left:51px;top:686px" width="14" height="13" viewBox="0 0 14 13"><rect x="0.5" y="0.5" width="13" height="12" fill="none" stroke="#C8C8C8"/><rect x="0" y="0" width="14" height="3" fill="#C8C8C8"/><rect x="2.2" y="5" width="2.4" height="1.2" fill="#C8C8C8"/><rect x="6.5" y="4.5" width="5" height="2.2" fill="none" stroke="#C8C8C8" stroke-width="0.9"/><rect x="2.2" y="8.8" width="2.4" height="1.2" fill="#C8C8C8"/><rect x="6.5" y="8.2" width="5" height="2.2" fill="none" stroke="#C8C8C8" stroke-width="0.9"/></svg><span class="a t" style="left:71.3px;top:684px;height:18px;line-height:18px;color:#F1F1F1;white-space:pre"><span style="font-size:11.5px;letter-spacing:-0.817px">IDD_MAP_OBJECT_PROPERTY_PAGE_EFFECT</span><span style="letter-spacing:-0.2px"> [Coreano (Corea del Sud)]</span></span><svg class="a" style="left:51px;top:704px" width="14" height="13" viewBox="0 0 14 13"><rect x="0.5" y="0.5" width="13" height="12" fill="none" stroke="#C8C8C8"/><rect x="0" y="0" width="14" height="3" fill="#C8C8C8"/><rect x="2.2" y="5" width="2.4" height="1.2" fill="#C8C8C8"/><rect x="6.5" y="4.5" width="5" height="2.2" fill="none" stroke="#C8C8C8" stroke-width="0.9"/><rect x="2.2" y="8.8" width="2.4" height="1.2" fill="#C8C8C8"/><rect x="6.5" y="8.2" width="5" height="2.2" fill="none" stroke="#C8C8C8" stroke-width="0.9"/></svg><span class="a t" style="left:71.3px;top:702px;height:18px;line-height:18px;color:#F1F1F1;white-space:pre"><span style="font-size:11.5px;letter-spacing:-0.820px">IDD_MAP_OBJECT_PROPERTY_PAGE_TREE</span><span style="letter-spacing:-0.2px"> [Coreano (Corea del Sud)]</span></span><svg class="a" style="left:51px;top:722px" width="14" height="13" viewBox="0 0 14 13"><rect x="0.5" y="0.5" width="13" height="12" fill="none" stroke="#C8C8C8"/><rect x="0" y="0" width="14" height="3" fill="#C8C8C8"/><rect x="2.2" y="5" width="2.4" height="1.2" fill="#C8C8C8"/><rect x="6.5" y="4.5" width="5" height="2.2" fill="none" stroke="#C8C8C8" stroke-width="0.9"/><rect x="2.2" y="8.8" width="2.4" height="1.2" fill="#C8C8C8"/><rect x="6.5" y="8.2" width="5" height="2.2" fill="none" stroke="#C8C8C8" stroke-width="0.9"/></svg><span class="a t" style="left:71.3px;top:720px;height:18px;line-height:18px;color:#F1F1F1;white-space:pre"><span style="font-size:11.5px;letter-spacing:-0.450px">IDD_MAP_PORTAL</span><span style="letter-spacing:-0.2px"> [Coreano (Corea del Sud)]</span></span></div>
<div class="a" style="left:330px;top:93px;width:17px;height:726px;background:#3E3E42;"></div>
<svg class="a" style="left:334px;top:99px;" width="9" height="5" viewBox="0 0 9 5"><path d="M0 5 L4.5 0 L9 5 Z" fill="#999999"/></svg>
<div class="a" style="left:334px;top:110px;width:9px;height:406px;background:#686868;"></div>
<svg class="a" style="left:334px;top:808px;" width="9" height="5" viewBox="0 0 9 5"><path d="M0 0 L4.5 5 L9 0 Z" fill="#999999"/></svg>
<div class="a" style="left:7px;top:819px;width:323px;height:17px;background:#3E3E42;"></div>
<div class="a" style="left:330px;top:819px;width:17px;height:17px;background:#2D2D30;"></div>
<div class="a" style="left:347px;top:71px;width:1px;height:766px;background:#3F3F46;"></div>
<div class="a" style="left:6px;top:836px;width:342px;height:1px;background:#3F3F46;"></div>
<svg class="a" style="left:12.5px;top:823px;" width="5" height="9" viewBox="0 0 5 9"><path d="M5 0 L0 4.5 L5 9 Z" fill="#999999"/></svg>
<div class="a" style="left:38px;top:823px;width:169px;height:9px;background:#686868;"></div>
<svg class="a" style="left:319px;top:823px;" width="5" height="9" viewBox="0 0 5 9"><path d="M0 0 L5 4.5 L0 9 Z" fill="#999999"/></svg>
<div class="a" style="left:6px;top:837px;width:342px;height:20px;background:#2D2D30;"></div>
<div class="a" style="left:211px;top:836px;width:68px;height:21px;background:#252526;border:1px solid #3F3F46;box-sizing:border-box;border-top:none;"></div>
<span class="a t" style="left:12px;top:837.0px;height:18px;line-height:18px;color:#D0D0D0;font-size:12px;letter-spacing:-0.461px;">Esplora s...</span>
<span class="a t" style="left:80px;top:837.0px;height:18px;line-height:18px;color:#D0D0D0;font-size:12px;letter-spacing:-0.345px;">Visualizz...</span>
<span class="a t" style="left:149px;top:837.0px;height:18px;line-height:18px;color:#D0D0D0;font-size:12px;letter-spacing:-0.321px;">Gestione...</span>
<span class="a t" style="left:217px;top:837.0px;height:18px;line-height:18px;color:#0E97F5;font-size:12px;letter-spacing:-0.345px;">Visualizz...</span>
<span class="a t" style="left:287px;top:837.0px;height:18px;line-height:18px;color:#D0D0D0;font-size:12px;letter-spacing:-0.569px;">Team Ex...</span>
<span class="a t" style="left:6.5px;top:862.0px;height:18px;line-height:18px;color:#D0D0D0;font-size:12px;letter-spacing:0.328px;">Output</span>
<span class="a t" style="left:56.5px;top:862.0px;height:18px;line-height:18px;color:#D0D0D0;font-size:12px;letter-spacing:-0.156px;">Elenco errori</span>
<div class="a" style="left:6px;top:882px;width:38px;height:6px;background:#3F3F46;"></div>
<div class="a" style="left:56px;top:882px;width:66px;height:6px;background:#3F3F46;"></div>
<div class="a" style="left:0px;top:888px;width:1428px;height:23px;background:#007ACC;"></div>
<svg class="a" style="left:5px;top:893px;" width="15" height="12" viewBox="0 0 15 12"><path d="M3 1 H14 L12 11 H1 Z" fill="none" stroke="#FFFFFF" stroke-width="1.2"/></svg>
<span class="a t" style="left:28px;top:891.0px;height:18px;line-height:18px;color:#FFFFFF;font-size:12px;letter-spacing:0.107px;">Pronto</span>
<div class="a" style="left:355px;top:71px;width:260px;height:20px;background:#3F3F46;"></div>
<span class="a t" style="left:359px;top:73.0px;height:18px;line-height:18px;color:#F1F1F1;font-size:12px;letter-spacing:-0.051px;">WorldEditor.rc - ID...a del Sud)] - Dialog*</span>
<svg class="a" style="left:582px;top:79px;" width="9" height="7" viewBox="0 0 9 7"><g fill="#77777B" shape-rendering="crispEdges"><rect x="0" y="3" width="3" height="1"/><rect x="3" y="0" width="1" height="7"/><rect x="4" y="1" width="5" height="1"/><rect x="4" y="4" width="5" height="2"/><rect x="8" y="1" width="1" height="5"/></g></svg>
<svg class="a" style="left:600.5px;top:78px;" width="9" height="8.5" viewBox="0 0 9 8.5"><path d="M0.3 0.3 L8.7 8.2 M8.7 0.3 L0.3 8.2" stroke="#707074" stroke-width="1.3"/></svg>
<div class="a" style="left:355px;top:90px;width:748px;height:2px;background:#3F3F46;"></div>
<div class="a" style="left:355px;top:92px;width:748px;height:714px;background:#FFFFFF;"></div>
<div class="a" style="left:355px;top:806px;width:748px;height:50px;background:#F0F0F0;"></div>
<div class="a" style="left:360px;top:97px;width:210px;height:709px;background:#F0F0F0;"></div>
<div class="a" style="left:367px;top:116px;width:196px;height:109px;border:1px solid #DCDCDC;box-sizing:border-box;"></div>
<span class="a t" style="left:376px;top:110.0px;height:14px;line-height:14px;color:#000000;font-size:12px;background:#F0F0F0;padding:0 2px;margin-left:-2px;letter-spacing:0.087px;">Rotation</span>
<div class="a" style="left:483px;top:111px;width:13px;height:13px;background:#FFFFFF;border:1px solid #333333;box-sizing:border-box;"></div>
<span class="a t" style="left:499.4px;top:112.0px;height:14px;line-height:14px;color:#000000;font-size:12px;background:#F0F0F0;padding:0 2px;margin-left:-2px;letter-spacing:-0.260px;">Random</span>
<div class="a" style="left:543px;top:116px;width:8px;height:1px;background:#F0F0F0;"></div>
<span class="a t" style="left:381px;top:138.0px;height:14px;line-height:14px;color:#000000;font-size:12px;letter-spacing:-0.400px;">X-</span>
<div class="a" style="left:396px;top:141px;width:135px;height:4px;background:#E7EAEA;border:1px solid #D6D6D6;box-sizing:border-box;"></div>
<svg class="a" style="left:397px;top:139px;" width="6" height="10" viewBox="0 0 6 10"><path d="M0 0 H6 V7 L3 10 L0 7 Z" fill="#0078D7"/></svg>
<div class="a" style="left:400px;top:151px;width:1px;height:4px;background:#B4B4B4;"></div>
<div class="a" style="left:413px;top:151px;width:1px;height:3px;background:#B4B4B4;"></div>
<div class="a" style="left:426px;top:151px;width:1px;height:3px;background:#B4B4B4;"></div>
<div class="a" style="left:438px;top:151px;width:1px;height:3px;background:#B4B4B4;"></div>
<div class="a" style="left:451px;top:151px;width:1px;height:3px;background:#B4B4B4;"></div>
<div class="a" style="left:464px;top:151px;width:1px;height:3px;background:#B4B4B4;"></div>
<div class="a" style="left:477px;top:151px;width:1px;height:3px;background:#B4B4B4;"></div>
<div class="a" style="left:490px;top:151px;width:1px;height:3px;background:#B4B4B4;"></div>
<div class="a" style="left:502px;top:151px;width:1px;height:3px;background:#B4B4B4;"></div>
<div class="a" style="left:515px;top:151px;width:1px;height:3px;background:#B4B4B4;"></div>
<div class="a" style="left:528px;top:151px;width:1px;height:3px;background:#B4B4B4;"></div>
<span class="a t" style="left:537px;top:138.0px;height:14px;line-height:14px;color:#000000;font-size:12px;letter-spacing:-0.408px;">X+</span>
<span class="a t" style="left:381.8px;top:168.0px;height:14px;line-height:14px;color:#000000;font-size:12px;letter-spacing:0.147px;">Y-</span>
<div class="a" style="left:396px;top:171px;width:135px;height:4px;background:#E7EAEA;border:1px solid #D6D6D6;box-sizing:border-box;"></div>
<svg class="a" style="left:397px;top:169px;" width="6" height="10" viewBox="0 0 6 10"><path d="M0 0 H6 V7 L3 10 L0 7 Z" fill="#0078D7"/></svg>
<div class="a" style="left:400px;top:181px;width:1px;height:4px;background:#B4B4B4;"></div>
<div class="a" style="left:413px;top:181px;width:1px;height:3px;background:#B4B4B4;"></div>
<div class="a" style="left:426px;top:181px;width:1px;height:3px;background:#B4B4B4;"></div>
<div class="a" style="left:438px;top:181px;width:1px;height:3px;background:#B4B4B4;"></div>
<div class="a" style="left:451px;top:181px;width:1px;height:3px;background:#B4B4B4;"></div>
<div class="a" style="left:464px;top:181px;width:1px;height:3px;background:#B4B4B4;"></div>
<div class="a" style="left:477px;top:181px;width:1px;height:3px;background:#B4B4B4;"></div>
<div class="a" style="left:490px;top:181px;width:1px;height:3px;background:#B4B4B4;"></div>
<div class="a" style="left:502px;top:181px;width:1px;height:3px;background:#B4B4B4;"></div>
<div class="a" style="left:515px;top:181px;width:1px;height:3px;background:#B4B4B4;"></div>
<div class="a" style="left:528px;top:181px;width:1px;height:3px;background:#B4B4B4;"></div>
<span class="a t" style="left:537px;top:168.0px;height:14px;line-height:14px;color:#000000;font-size:12px;letter-spacing:-0.408px;">Y+</span>
<span class="a t" style="left:381px;top:196.0px;height:14px;line-height:14px;color:#000000;font-size:12px;letter-spacing:-0.064px;">Z-</span>
<div class="a" style="left:396px;top:199px;width:135px;height:4px;background:#E7EAEA;border:1px solid #D6D6D6;box-sizing:border-box;"></div>
<svg class="a" style="left:397px;top:197px;" width="6" height="10" viewBox="0 0 6 10"><path d="M0 0 H6 V7 L3 10 L0 7 Z" fill="#0078D7"/></svg>
<div class="a" style="left:400px;top:209px;width:1px;height:4px;background:#B4B4B4;"></div>
<div class="a" style="left:413px;top:209px;width:1px;height:3px;background:#B4B4B4;"></div>
<div class="a" style="left:426px;top:209px;width:1px;height:3px;background:#B4B4B4;"></div>
<div class="a" style="left:438px;top:209px;width:1px;height:3px;background:#B4B4B4;"></div>
<div class="a" style="left:451px;top:209px;width:1px;height:3px;background:#B4B4B4;"></div>
<div class="a" style="left:464px;top:209px;width:1px;height:3px;background:#B4B4B4;"></div>
<div class="a" style="left:477px;top:209px;width:1px;height:3px;background:#B4B4B4;"></div>
<div class="a" style="left:490px;top:209px;width:1px;height:3px;background:#B4B4B4;"></div>
<div class="a" style="left:502px;top:209px;width:1px;height:3px;background:#B4B4B4;"></div>
<div class="a" style="left:515px;top:209px;width:1px;height:3px;background:#B4B4B4;"></div>
<div class="a" style="left:528px;top:209px;width:1px;height:3px;background:#B4B4B4;"></div>
<span class="a t" style="left:537px;top:196.0px;height:14px;line-height:14px;color:#000000;font-size:12px;letter-spacing:-0.072px;">Z+</span>
<div class="a" style="left:367px;top:239px;width:196px;height:39px;border:1px solid #DCDCDC;box-sizing:border-box;"></div>
<span class="a t" style="left:376px;top:233.0px;height:14px;line-height:14px;color:#000000;font-size:12px;background:#F0F0F0;padding:0 2px;margin-left:-2px;letter-spacing:-0.089px;">Height Base</span>
<div class="a" style="left:378px;top:257px;width:104px;height:4px;background:#E7EAEA;border:1px solid #D6D6D6;box-sizing:border-box;"></div>
<svg class="a" style="left:379px;top:255px;" width="6" height="10" viewBox="0 0 6 10"><path d="M0 0 H6 V7 L3 10 L0 7 Z" fill="#0078D7"/></svg>
<div class="a" style="left:382px;top:267px;width:1px;height:3px;background:#B4B4B4;"></div>
<div class="a" style="left:479px;top:267px;width:1px;height:3px;background:#B4B4B4;"></div>
<div class="a" style="left:490px;top:253px;width:49px;height:16px;background:#F0F0F0;border:1px solid;border-color:#A0A0A0 #FFFFFF #FFFFFF #A0A0A0;box-sizing:border-box;"></div>
<span class="a t" style="left:499.3px;top:255.0px;height:14px;line-height:14px;color:#000000;font-size:12px;letter-spacing:0.164px;">Static</span>
<span class="a t" style="left:544.2px;top:254.0px;height:14px;line-height:14px;color:#000000;font-size:12px;letter-spacing:0.000px;">m</span>
<div class="a" style="left:367px;top:291px;width:196px;height:39px;border:1px solid #DCDCDC;box-sizing:border-box;"></div>
<span class="a t" style="left:376px;top:285.0px;height:14px;line-height:14px;color:#000000;font-size:12px;background:#F0F0F0;padding:0 2px;margin-left:-2px;letter-spacing:-0.080px;">Ambience Scale</span>
<div class="a" style="left:378px;top:309px;width:104px;height:4px;background:#E7EAEA;border:1px solid #D6D6D6;box-sizing:border-box;"></div>
<svg class="a" style="left:379px;top:307px;" width="6" height="10" viewBox="0 0 6 10"><path d="M0 0 H6 V7 L3 10 L0 7 Z" fill="#0078D7"/></svg>
<div class="a" style="left:382px;top:319px;width:1px;height:3px;background:#B4B4B4;"></div>
<div class="a" style="left:479px;top:319px;width:1px;height:3px;background:#B4B4B4;"></div>
<div class="a" style="left:490px;top:302px;width:49px;height:16px;background:#F0F0F0;border:1px solid;border-color:#A0A0A0 #FFFFFF #FFFFFF #A0A0A0;box-sizing:border-box;"></div>
<span class="a t" style="left:499.3px;top:304.0px;height:14px;line-height:14px;color:#000000;font-size:12px;letter-spacing:0.164px;">Static</span>
<span class="a t" style="left:544.2px;top:303.0px;height:14px;line-height:14px;color:#000000;font-size:12px;letter-spacing:0.000px;">m</span>
<div class="a" style="left:367px;top:344px;width:196px;height:46px;border:1px solid #DCDCDC;box-sizing:border-box;"></div>
<span class="a t" style="left:376px;top:338.0px;height:14px;line-height:14px;color:#000000;font-size:12px;background:#F0F0F0;padding:0 2px;margin-left:-2px;letter-spacing:-0.383px;">Snap</span>
<div class="a" style="left:507px;top:344px;width:38px;height:1px;background:#F0F0F0"></div>
<div class="a" style="left:507px;top:345px;width:40px;height:12px;overflow:hidden;background:#F0F0F0"><span class="a t" style="left:2.4px;top:-3px;line-height:14px;font-size:12px;color:#000;letter-spacing:-0.05px">Enable</span></div>
<div class="a" style="left:493px;top:341px;width:13px;height:13px;background:#FFFFFF;border:1px solid #333333;box-sizing:border-box;"></div>
<div class="a" style="left:378px;top:367px;width:104px;height:4px;background:#E7EAEA;border:1px solid #D6D6D6;box-sizing:border-box;"></div>
<svg class="a" style="left:379px;top:365px;" width="6" height="10" viewBox="0 0 6 10"><path d="M0 0 H6 V7 L3 10 L0 7 Z" fill="#0078D7"/></svg>
<div class="a" style="left:382px;top:377px;width:1px;height:3px;background:#B4B4B4;"></div>
<div class="a" style="left:479px;top:377px;width:1px;height:3px;background:#B4B4B4;"></div>
<div class="a" style="left:490px;top:363px;width:49px;height:16px;background:#F0F0F0;border:1px solid;border-color:#A0A0A0 #FFFFFF #FFFFFF #A0A0A0;box-sizing:border-box;"></div>
<span class="a t" style="left:499.3px;top:365.0px;height:14px;line-height:14px;color:#000000;font-size:12px;letter-spacing:0.164px;">Static</span>
<span class="a t" style="left:544.2px;top:364.0px;height:14px;line-height:14px;color:#000000;font-size:12px;letter-spacing:0.000px;">m</span>
<div class="a" style="left:368px;top:401px;width:94px;height:19px;background:#E1E1E1;border:1px solid #ADADAD;box-sizing:border-box;"></div>
<span class="a t" style="left:376.6px;top:404.0px;height:14px;line-height:14px;color:#000000;font-size:12px;letter-spacing:-0.184px;">Nuova Cartella</span>
<div class="a" style="left:466px;top:401px;width:94px;height:19px;background:#E1E1E1;border:1px solid #ADADAD;box-sizing:border-box;"></div>
<span class="a t" style="left:489.35px;top:404.0px;height:14px;line-height:14px;color:#000000;font-size:12px;letter-spacing:0.077px;">Unselect</span>
<div class="a" style="left:368px;top:426px;width:94px;height:18px;background:#E1E1E1;border:1px solid #ADADAD;box-sizing:border-box;"></div>
<span class="a t" style="left:382.25px;top:428.0px;height:14px;line-height:14px;color:#000000;font-size:12px;letter-spacing:0.347px;">New Object</span>
<div class="a" style="left:466px;top:426px;width:94px;height:18px;background:#E1E1E1;border:1px solid #ADADAD;box-sizing:border-box;"></div>
<span class="a t" style="left:474.5px;top:428.0px;height:14px;line-height:14px;color:#000000;font-size:12px;letter-spacing:0.331px;">Delete Object</span>
<div class="a" style="left:362.5px;top:395.5px;width:4.5px;height:4.5px;background:#404040;"></div>
<div class="a" style="left:413px;top:395.5px;width:4.5px;height:4.5px;background:#404040;"></div>
<div class="a" style="left:464px;top:395.5px;width:4.5px;height:4.5px;background:#404040;"></div>
<div class="a" style="left:362.5px;top:409px;width:4.5px;height:4.5px;background:#404040;"></div>
<div class="a" style="left:464px;top:409px;width:4.5px;height:4.5px;background:#404040;"></div>
<div class="a" style="left:362.5px;top:422px;width:4.5px;height:4.5px;background:#404040;"></div>
<div class="a" style="left:413px;top:422px;width:4.5px;height:4.5px;background:#404040;"></div>
<div class="a" style="left:464px;top:422px;width:4.5px;height:4.5px;background:#404040;"></div>
<div class="a" style="left:367px;top:452px;width:198px;height:354px;background:#FFFFFF;border:1px solid #828282;box-sizing:border-box;border-bottom:none;"></div>
<svg class="a" style="left:379px;top:468px;" width="1" height="58" viewBox="0 0 1 58"><path d="M0.5 0 V58" stroke="#808080" stroke-width="1" stroke-dasharray="1 1"/></svg>
<svg class="a" style="left:379px;top:477px;" width="11" height="1" viewBox="0 0 11 1"><path d="M0 0.5 H11" stroke="#808080" stroke-width="1" stroke-dasharray="1 1"/></svg>
<svg class="a" style="left:379px;top:525px;" width="11" height="1" viewBox="0 0 11 1"><path d="M0 0.5 H11" stroke="#808080" stroke-width="1" stroke-dasharray="1 1"/></svg>
<svg class="a" style="left:398px;top:484px;" width="1" height="26" viewBox="0 0 1 26"><path d="M0.5 0 V26" stroke="#808080" stroke-width="1" stroke-dasharray="1 1"/></svg>
<svg class="a" style="left:398px;top:493px;" width="11" height="1" viewBox="0 0 11 1"><path d="M0 0.5 H11" stroke="#808080" stroke-width="1" stroke-dasharray="1 1"/></svg>
<svg class="a" style="left:398px;top:509px;" width="11" height="1" viewBox="0 0 11 1"><path d="M0 0.5 H11" stroke="#808080" stroke-width="1" stroke-dasharray="1 1"/></svg>
<svg class="a" style="left:371px;top:453px;" width="15" height="15" viewBox="0 0 15 15"><path d="M0 0 H5.2 L7.5 2.4 L9.8 0 H15 V5.2 L12.6 7.5 L15 9.8 V15 H9.8 L7.5 12.6 L5.2 15 H0 V9.8 L2.4 7.5 L0 5.2 Z" fill="#808000"/><rect x="9.8" y="1" width="4.4" height="4" fill="#FFFF00"/><rect x="1" y="10" width="4.4" height="4" fill="#FFFF00"/><circle cx="3.6" cy="3.4" r="2.3" fill="none" stroke="#FFFF00" stroke-width="0.9" stroke-dasharray="0.9 1.1"/><circle cx="11.4" cy="11.6" r="2.3" fill="none" stroke="#FFFF00" stroke-width="0.9" stroke-dasharray="0.9 1.1"/><path d="M8.3 3.4 C8.3 5.6 9.6 6.6 11.8 6.6" fill="none" stroke="#FFFF00" stroke-width="0.9" stroke-dasharray="0.9 1.1"/><path d="M3.4 8.3 C5.6 8.3 6.6 9.6 6.6 11.8" fill="none" stroke="#FFFF00" stroke-width="0.9" stroke-dasharray="0.9 1.1"/></svg>
<span class="a t" style="left:392px;top:455.0px;height:14px;line-height:14px;color:#000000;font-size:12px;letter-spacing:-0.116px;">Nodo espanso</span>
<svg class="a" style="left:390px;top:469px;" width="15" height="15" viewBox="0 0 15 15"><path d="M0 0 H5.2 L7.5 2.4 L9.8 0 H15 V5.2 L12.6 7.5 L15 9.8 V15 H9.8 L7.5 12.6 L5.2 15 H0 V9.8 L2.4 7.5 L0 5.2 Z" fill="#808000"/><rect x="9.8" y="1" width="4.4" height="4" fill="#FFFF00"/><rect x="1" y="10" width="4.4" height="4" fill="#FFFF00"/><circle cx="3.6" cy="3.4" r="2.3" fill="none" stroke="#FFFF00" stroke-width="0.9" stroke-dasharray="0.9 1.1"/><circle cx="11.4" cy="11.6" r="2.3" fill="none" stroke="#FFFF00" stroke-width="0.9" stroke-dasharray="0.9 1.1"/><path d="M8.3 3.4 C8.3 5.6 9.6 6.6 11.8 6.6" fill="none" stroke="#FFFF00" stroke-width="0.9" stroke-dasharray="0.9 1.1"/><path d="M3.4 8.3 C5.6 8.3 6.6 9.6 6.6 11.8" fill="none" stroke="#FFFF00" stroke-width="0.9" stroke-dasharray="0.9 1.1"/></svg>
<span class="a t" style="left:411px;top:471.0px;height:14px;line-height:14px;color:#000000;font-size:12px;letter-spacing:-0.116px;">Nodo espanso</span>
<svg class="a" style="left:409px;top:485px;" width="15" height="15" viewBox="0 0 15 15"><path d="M0 0 H5.2 L7.5 2.4 L9.8 0 H15 V5.2 L12.6 7.5 L15 9.8 V15 H9.8 L7.5 12.6 L5.2 15 H0 V9.8 L2.4 7.5 L0 5.2 Z" fill="#808000"/><rect x="9.8" y="1" width="4.4" height="4" fill="#FFFF00"/><rect x="1" y="10" width="4.4" height="4" fill="#FFFF00"/><circle cx="3.6" cy="3.4" r="2.3" fill="none" stroke="#FFFF00" stroke-width="0.9" stroke-dasharray="0.9 1.1"/><circle cx="11.4" cy="11.6" r="2.3" fill="none" stroke="#FFFF00" stroke-width="0.9" stroke-dasharray="0.9 1.1"/><path d="M8.3 3.4 C8.3 5.6 9.6 6.6 11.8 6.6" fill="none" stroke="#FFFF00" stroke-width="0.9" stroke-dasharray="0.9 1.1"/><path d="M3.4 8.3 C5.6 8.3 6.6 9.6 6.6 11.8" fill="none" stroke="#FFFF00" stroke-width="0.9" stroke-dasharray="0.9 1.1"/></svg>
<span class="a t" style="left:430px;top:487.0px;height:14px;line-height:14px;color:#000000;font-size:12px;letter-spacing:-0.531px;">Foglia</span>
<svg class="a" style="left:409px;top:501px;" width="15" height="15" viewBox="0 0 15 15"><path d="M0 0 H5.2 L7.5 2.4 L9.8 0 H15 V5.2 L12.6 7.5 L15 9.8 V15 H9.8 L7.5 12.6 L5.2 15 H0 V9.8 L2.4 7.5 L0 5.2 Z" fill="#808000"/><rect x="9.8" y="1" width="4.4" height="4" fill="#FFFF00"/><rect x="1" y="10" width="4.4" height="4" fill="#FFFF00"/><circle cx="3.6" cy="3.4" r="2.3" fill="none" stroke="#FFFF00" stroke-width="0.9" stroke-dasharray="0.9 1.1"/><circle cx="11.4" cy="11.6" r="2.3" fill="none" stroke="#FFFF00" stroke-width="0.9" stroke-dasharray="0.9 1.1"/><path d="M8.3 3.4 C8.3 5.6 9.6 6.6 11.8 6.6" fill="none" stroke="#FFFF00" stroke-width="0.9" stroke-dasharray="0.9 1.1"/><path d="M3.4 8.3 C5.6 8.3 6.6 9.6 6.6 11.8" fill="none" stroke="#FFFF00" stroke-width="0.9" stroke-dasharray="0.9 1.1"/></svg>
<span class="a t" style="left:430px;top:503.0px;height:14px;line-height:14px;color:#000000;font-size:12px;letter-spacing:-0.531px;">Foglia</span>
<svg class="a" style="left:390px;top:517px;" width="15" height="15" viewBox="0 0 15 15"><path d="M0 0 H5.2 L7.5 2.4 L9.8 0 H15 V5.2 L12.6 7.5 L15 9.8 V15 H9.8 L7.5 12.6 L5.2 15 H0 V9.8 L2.4 7.5 L0 5.2 Z" fill="#808000"/><rect x="9.8" y="1" width="4.4" height="4" fill="#FFFF00"/><rect x="1" y="10" width="4.4" height="4" fill="#FFFF00"/><circle cx="3.6" cy="3.4" r="2.3" fill="none" stroke="#FFFF00" stroke-width="0.9" stroke-dasharray="0.9 1.1"/><circle cx="11.4" cy="11.6" r="2.3" fill="none" stroke="#FFFF00" stroke-width="0.9" stroke-dasharray="0.9 1.1"/><path d="M8.3 3.4 C8.3 5.6 9.6 6.6 11.8 6.6" fill="none" stroke="#FFFF00" stroke-width="0.9" stroke-dasharray="0.9 1.1"/><path d="M3.4 8.3 C5.6 8.3 6.6 9.6 6.6 11.8" fill="none" stroke="#FFFF00" stroke-width="0.9" stroke-dasharray="0.9 1.1"/></svg>
<span class="a t" style="left:411px;top:519.0px;height:14px;line-height:14px;color:#000000;font-size:12px;letter-spacing:-0.023px;">Nodo compresso</span>
<svg class="a" style="left:371px;top:533px;" width="15" height="15" viewBox="0 0 15 15"><path d="M0 0 H5.2 L7.5 2.4 L9.8 0 H15 V5.2 L12.6 7.5 L15 9.8 V15 H9.8 L7.5 12.6 L5.2 15 H0 V9.8 L2.4 7.5 L0 5.2 Z" fill="#808000"/><rect x="9.8" y="1" width="4.4" height="4" fill="#FFFF00"/><rect x="1" y="10" width="4.4" height="4" fill="#FFFF00"/><circle cx="3.6" cy="3.4" r="2.3" fill="none" stroke="#FFFF00" stroke-width="0.9" stroke-dasharray="0.9 1.1"/><circle cx="11.4" cy="11.6" r="2.3" fill="none" stroke="#FFFF00" stroke-width="0.9" stroke-dasharray="0.9 1.1"/><path d="M8.3 3.4 C8.3 5.6 9.6 6.6 11.8 6.6" fill="none" stroke="#FFFF00" stroke-width="0.9" stroke-dasharray="0.9 1.1"/><path d="M3.4 8.3 C5.6 8.3 6.6 9.6 6.6 11.8" fill="none" stroke="#FFFF00" stroke-width="0.9" stroke-dasharray="0.9 1.1"/></svg>
<span class="a t" style="left:392px;top:535.0px;height:14px;line-height:14px;color:#000000;font-size:12px;letter-spacing:-0.531px;">Foglia</span>
<div class="a" style="left:360px;top:814px;width:13px;height:13px;background:#FFFFFF;border:1px solid #333333;box-sizing:border-box;"></div>
<span class="a t" style="left:376.5px;top:814.0px;height:14px;line-height:14px;color:#000000;font-size:11px;letter-spacing:-0.309px;">Immagine mockup:</span>
<div class="a" style="left:466px;top:811px;width:327.5px;height:18.5px;background:#F0F0F0;border:1px solid #B4B4B4;box-sizing:border-box;"></div>
<div class="a" style="left:467px;top:812px;width:325.5px;height:16.5px;border:1px solid #FAFAFA;box-sizing:border-box;"></div>
<div class="a" style="left:795.5px;top:812px;width:19.5px;height:17px;background:#CCCCCC;border:1px solid #BFBFBF;box-sizing:border-box;"></div>
<span class="a t" style="left:801px;top:813.5px;height:14px;line-height:14px;color:#A39AA8;font-size:11px;">...</span>
<span class="a t" style="left:399px;top:834.5px;height:14px;line-height:14px;color:#A0A0A0;font-size:11px;letter-spacing:-0.284px;">Trasparenza:</span>
<div class="a" style="left:470px;top:838.5px;width:137.5px;height:3.5px;background:#E3E3E3;border:1px solid #D0D0D0;box-sizing:border-box;"></div>
<div class="a" style="left:536px;top:834px;width:5.5px;height:12px;background:#CCCCCC;"></div>
<span class="a t" style="left:616.5px;top:834.5px;height:14px;line-height:14px;color:#A0A0A0;font-size:11px;letter-spacing:-0.510px;">50%</span>
<span class="a t" style="left:652.5px;top:834.5px;height:14px;line-height:14px;color:#A0A0A0;font-size:11px;letter-spacing:-0.177px;">Offset X:</span>
<div class="a" style="left:696px;top:832px;width:52.5px;height:19.5px;background:#FFFFFF;border:1px solid #ABABAB;box-sizing:border-box;"></div>
<span class="a t" style="left:700px;top:834.5px;height:14px;line-height:14px;color:#000000;font-size:11px;">0</span>
<div class="a" style="left:731.0px;top:833px;width:16.5px;height:17.5px;background:#F0F0F0;border:1px solid #D0D0D0;box-sizing:border-box;"></div>
<div class="a" style="left:731.0px;top:841.5px;width:16.5px;height:1px;background:#D0D0D0;"></div>
<svg class="a" style="left:736.5px;top:835.5px;" width="6" height="3" viewBox="0 0 6 3"><path d="M0 3 L3 0 L6 3 Z" fill="#404040"/></svg>
<svg class="a" style="left:736.5px;top:845px;" width="6" height="3" viewBox="0 0 6 3"><path d="M0 0 L3 3 L6 0 Z" fill="#404040"/></svg>
<span class="a t" style="left:752px;top:834.5px;height:14px;line-height:14px;color:#A0A0A0;font-size:11px;letter-spacing:0.102px;">Y:</span>
<div class="a" style="left:764px;top:832px;width:52px;height:19.5px;background:#FFFFFF;border:1px solid #ABABAB;box-sizing:border-box;"></div>
<span class="a t" style="left:768px;top:834.5px;height:14px;line-height:14px;color:#000000;font-size:11px;">0</span>
<div class="a" style="left:798.5px;top:833px;width:16.5px;height:17.5px;background:#F0F0F0;border:1px solid #D0D0D0;box-sizing:border-box;"></div>
<div class="a" style="left:798.5px;top:841.5px;width:16.5px;height:1px;background:#D0D0D0;"></div>
<svg class="a" style="left:804px;top:835.5px;" width="6" height="3" viewBox="0 0 6 3"><path d="M0 3 L3 0 L6 3 Z" fill="#404040"/></svg>
<svg class="a" style="left:804px;top:845px;" width="6" height="3" viewBox="0 0 6 3"><path d="M0 0 L3 3 L6 0 Z" fill="#404040"/></svg>
<div class="a" style="left:1107px;top:72px;width:296px;height:785px;background:#252526;"></div>
<div class="a" style="left:1107px;top:72px;width:296px;height:21px;background:#007ACC;"></div>
<span class="a t" style="left:1111px;top:74.0px;height:18px;line-height:18px;color:#FFFFFF;font-size:12px;letter-spacing:-0.078px;">Proprietà</span>
<svg class="a" style="left:1167px;top:80px;" width="180" height="5" viewBox="0 0 180 5"><g fill="#5CB0EE"><rect x="0" y="0" width="1" height="1"/><rect x="4" y="0" width="1" height="1"/><rect x="8" y="0" width="1" height="1"/><rect x="12" y="0" width="1" height="1"/><rect x="16" y="0" width="1" height="1"/><rect x="20" y="0" width="1" height="1"/><rect x="24" y="0" width="1" height="1"/><rect x="28" y="0" width="1" height="1"/><rect x="32" y="0" width="1" height="1"/><rect x="36" y="0" width="1" height="1"/><rect x="40" y="0" width="1" height="1"/><rect x="44" y="0" width="1" height="1"/><rect x="48" y="0" width="1" height="1"/><rect x="52" y="0" width="1" height="1"/><rect x="56" y="0" width="1" height="1"/><rect x="60" y="0" width="1" height="1"/><rect x="64" y="0" width="1" height="1"/><rect x="68" y="0" width="1" height="1"/><rect x="72" y="0" width="1" height="1"/><rect x="76" y="0" width="1" height="1"/><rect x="80" y="0" width="1" height="1"/><rect x="84" y="0" width="1" height="1"/><rect x="88" y="0" width="1" height="1"/><rect x="92" y="0" width="1" height="1"/><rect x="96" y="0" width="1" height="1"/><rect x="100" y="0" width="1" height="1"/><rect x="104" y="0" width="1" height="1"/><rect x="108" y="0" width="1" height="1"/><rect x="112" y="0" width="1" height="1"/><rect x="116" y="0" width="1" height="1"/><rect x="120" y="0" width="1" height="1"/><rect x="124" y="0" width="1" height="1"/><rect x="128" y="0" width="1" height="1"/><rect x="132" y="0" width="1" height="1"/><rect x="136" y="0" width="1" height="1"/><rect x="140" y="0" width="1" height="1"/><rect x="144" y="0" width="1" height="1"/><rect x="148" y="0" width="1" height="1"/><rect x="152" y="0" width="1" height="1"/><rect x="156" y="0" width="1" height="1"/><rect x="160" y="0" width="1" height="1"/><rect x="164" y="0" width="1" height="1"/><rect x="168" y="0" width="1" height="1"/><rect x="172" y="0" width="1" height="1"/><rect x="176" y="0" width="1" height="1"/><rect x="2" y="2" width="1" height="1"/><rect x="6" y="2" width="1" height="1"/><rect x="10" y="2" width="1" height="1"/><rect x="14" y="2" width="1" height="1"/><rect x="18" y="2" width="1" height="1"/><rect x="22" y="2" width="1" height="1"/><rect x="26" y="2" width="1" height="1"/><rect x="30" y="2" width="1" height="1"/><rect x="34" y="2" width="1" height="1"/><rect x="38" y="2" width="1" height="1"/><rect x="42" y="2" width="1" height="1"/><rect x="46" y="2" width="1" height="1"/><rect x="50" y="2" width="1" height="1"/><rect x="54" y="2" width="1" height="1"/><rect x="58" y="2" width="1" height="1"/><rect x="62" y="2" width="1" height="1"/><rect x="66" y="2" width="1" height="1"/><rect x="70" y="2" width="1" height="1"/><rect x="74" y="2" width="1" height="1"/><rect x="78" y="2" width="1" height="1"/><rect x="82" y="2" width="1" height="1"/><rect x="86" y="2" width="1" height="1"/><rect x="90" y="2" width="1" height="1"/><rect x="94" y="2" width="1" height="1"/><rect x="98" y="2" width="1" height="1"/><rect x="102" y="2" width="1" height="1"/><rect x="106" y="2" width="1" height="1"/><rect x="110" y="2" width="1" height="1"/><rect x="114" y="2" width="1" height="1"/><rect x="118" y="2" width="1" height="1"/><rect x="122" y="2" width="1" height="1"/><rect x="126" y="2" width="1" height="1"/><rect x="130" y="2" width="1" height="1"/><rect x="134" y="2" width="1" height="1"/><rect x="138" y="2" width="1" height="1"/><rect x="142" y="2" width="1" height="1"/><rect x="146" y="2" width="1" height="1"/><rect x="150" y="2" width="1" height="1"/><rect x="154" y="2" width="1" height="1"/><rect x="158" y="2" width="1" height="1"/><rect x="162" y="2" width="1" height="1"/><rect x="166" y="2" width="1" height="1"/><rect x="170" y="2" width="1" height="1"/><rect x="174" y="2" width="1" height="1"/><rect x="178" y="2" width="1" height="1"/><rect x="0" y="4" width="1" height="1"/><rect x="4" y="4" width="1" height="1"/><rect x="8" y="4" width="1" height="1"/><rect x="12" y="4" width="1" height="1"/><rect x="16" y="4" width="1" height="1"/><rect x="20" y="4" width="1" height="1"/><rect x="24" y="4" width="1" height="1"/><rect x="28" y="4" width="1" height="1"/><rect x="32" y="4" width="1" height="1"/><rect x="36" y="4" width="1" height="1"/><rect x="40" y="4" width="1" height="1"/><rect x="44" y="4" width="1" height="1"/><rect x="48" y="4" width="1" height="1"/><rect x="52" y="4" width="1" height="1"/><rect x="56" y="4" width="1" height="1"/><rect x="60" y="4" width="1" height="1"/><rect x="64" y="4" width="1" height="1"/><rect x="68" y="4" width="1" height="1"/><rect x="72" y="4" width="1" height="1"/><rect x="76" y="4" width="1" height="1"/><rect x="80" y="4" width="1" height="1"/><rect x="84" y="4" width="1" height="1"/><rect x="88" y="4" width="1" height="1"/><rect x="92" y="4" width="1" height="1"/><rect x="96" y="4" width="1" height="1"/><rect x="100" y="4" width="1" height="1"/><rect x="104" y="4" width="1" height="1"/><rect x="108" y="4" width="1" height="1"/><rect x="112" y="4" width="1" height="1"/><rect x="116" y="4" width="1" height="1"/><rect x="120" y="4" width="1" height="1"/><rect x="124" y="4" width="1" height="1"/><rect x="128" y="4" width="1" height="1"/><rect x="132" y="4" width="1" height="1"/><rect x="136" y="4" width="1" height="1"/><rect x="140" y="4" width="1" height="1"/><rect x="144" y="4" width="1" height="1"/><rect x="148" y="4" width="1" height="1"/><rect x="152" y="4" width="1" height="1"/><rect x="156" y="4" width="1" height="1"/><rect x="160" y="4" width="1" height="1"/><rect x="164" y="4" width="1" height="1"/><rect x="168" y="4" width="1" height="1"/><rect x="172" y="4" width="1" height="1"/><rect x="176" y="4" width="1" height="1"/></g></svg>
<svg class="a" style="left:1354px;top:80px;" width="8" height="4.5" viewBox="0 0 8 4.5"><path d="M0 0 H8 L4 4.5 Z" fill="#FFFFFF"/></svg>
<svg class="a" style="left:1369px;top:79px;" width="11" height="7" viewBox="0 0 11 7"><g fill="#FFFFFF" shape-rendering="crispEdges"><rect x="0" y="3" width="4" height="1"/><rect x="4" y="0" width="1" height="7"/><rect x="5" y="1" width="6" height="1"/><rect x="5" y="4" width="6" height="2"/><rect x="10" y="1" width="1" height="5"/></g></svg>
<svg class="a" style="left:1386.5px;top:78px;" width="10" height="9" viewBox="0 0 10 9"><path d="M0.5 0.3 L9.5 8.7 M9.5 0.3 L0.5 8.7" stroke="#FFFFFF" stroke-width="1.5"/></svg>
<div class="a" style="left:1107px;top:93px;width:296px;height:24px;background:#333337;"></div>
<span class="a t" style="left:1113.5px;top:95.5px;height:18px;line-height:18px;color:#F1F1F1;font-size:11.5px;font-weight:bold;letter-spacing:-0.399px;">IDD_MAP_CREATE_DIRECTORY</span>
<span class="a t" style="left:1285.5px;top:95.5px;height:18px;line-height:18px;color:#F1F1F1;font-size:12px;font-weight:bold;letter-spacing:-0.134px;">(Button Control)</span>
<div class="a" style="left:1384.5px;top:99px;width:1px;height:11px;background:#C8C8C8;"></div>
<svg class="a" style="left:1392.5px;top:103.5px;" width="6" height="3.5" viewBox="0 0 6 3.5"><path d="M0 0 H6 L3 3.5 Z" fill="#F1F1F1"/></svg>
<div class="a" style="left:1107px;top:117px;width:296px;height:28px;background:#2D2D30;"></div>
<div class="a" style="left:1110px;top:119px;width:23px;height:22px;border:1px solid #3399FF;box-sizing:border-box;"></div>
<svg class="a" style="left:1114px;top:123px;" width="15" height="14" viewBox="0 0 15 14"><g fill="#D4D4D4"><rect x="0" y="0" width="5" height="5"/><rect x="0" y="9" width="5" height="5"/><rect x="6" y="0" width="5" height="1"/><rect x="6" y="2" width="5" height="1"/><rect x="6" y="4" width="5" height="1"/><rect x="6" y="6" width="5" height="1"/><rect x="6" y="8" width="5" height="1"/><rect x="6" y="11" width="5" height="1"/><rect x="6" y="13" width="5" height="1"/><rect x="12" y="2" width="2" height="1"/><rect x="12" y="4" width="2" height="1"/><rect x="12" y="6" width="2" height="1"/><rect x="12" y="8" width="2" height="1"/><rect x="12" y="13" width="2" height="1"/></g><path d="M2.5 1 V4 M1 2.5 H4 M2.5 10 V13 M1 11.5 H4" stroke="#2D2D30" stroke-width="1"/></svg>
<svg class="a" style="left:1137px;top:123px;" width="15" height="15" viewBox="0 0 15 15"><rect x="0" y="0" width="7" height="7" fill="#D4D4D4"/><path d="M1.7 6 L3.5 1.4 L5.3 6 M2.4 4.4 H4.6" stroke="#2D2D30" stroke-width="1.1" fill="none"/><path d="M1 9.7 H5.6 L1.2 13.3 H6" stroke="#D4D4D4" stroke-width="1.4" fill="none"/><path d="M11 3 V10" stroke="#5BC0F5" stroke-width="2" fill="none"/><path d="M8 7.4 L11 12 L14 7.4 L11 9 Z" fill="#5BC0F5"/></svg>
<div class="a" style="left:1162px;top:119px;width:23px;height:22px;border:1px solid #3399FF;box-sizing:border-box;"></div>
<svg class="a" style="left:1164px;top:121px;" width="18" height="17" viewBox="0 0 18 17"><path d="M4.6 6 V2.8 H11.4 L14.6 6 V15.4 H7.2" fill="none" stroke="#D4D4D4" stroke-width="1.1"/><path d="M11 3 V6.4 H14.4" fill="none" stroke="#D4D4D4" stroke-width="1"/><path d="M11.4 1 L15.8 5.4 M12.6 0.6 L16.4 4.4" stroke="#F1F1F1" stroke-width="0.8"/><path d="M1.1 6.2 L2.6 5.3 V7.8 L3.4 8.6 H5.4 L6.2 7.8 V5.3 L7.7 6.2 V9.2 L5.6 11.2 V15.9 H3.2 V11.2 L1.1 9.2 Z" fill="#D4D4D4"/></svg>
<svg class="a" style="left:1190.5px;top:122px;" width="13" height="15" viewBox="0 0 13 15"><path d="M10 0.6 H11.8 L4.8 6.4 H9 L1.6 14 L1 13.5 L5.2 8 H1.2 L1 7.2 Z" fill="#000000" transform="translate(0.9,0.7)"/><path d="M10 0.6 H11.8 L4.8 6.4 H9 L1.6 14 L1 13.5 L5.2 8 H1.2 L1 7.2 Z" fill="#FFFFFF" transform="translate(-0.5,-0.4)"/><path d="M10 0.6 H11.8 L4.8 6.4 H9 L1.6 14 L1 13.5 L5.2 8 H1.2 L1 7.2 Z" fill="#FFFF00"/></svg>
<div class="a" style="left:1211px;top:121.5px;width:1px;height:19px;background:#3F3F46;"></div>
<svg class="a" style="left:1216.5px;top:121.5px;" width="17" height="17" viewBox="0 0 17 17"><path d="M9.4 0.4 H13.6 L16.6 3.4 V7.6 L13.6 10.6 H11 L4.4 16.8 H0.6 V13.4 L6.4 7.2 V3.4 Z" fill="#999999"/><path d="M10.6 4.6 L12.6 2.6 L14.4 4.4 L12.4 6.4 Z" fill="#7C7C7C"/></svg>
<div class="a" style="left:1107px;top:145px;width:294px;height:570px;background:#2D2D30;"></div>
<div class="a" style="left:1110px;top:149px;width:9px;height:9px;border:1px solid #E4E4E4;box-sizing:border-box;"></div>
<div class="a" style="left:1112px;top:153px;width:5px;height:1px;background:#E4E4E4;"></div>
<span class="a t" style="left:1126px;top:145.0px;height:18px;line-height:18px;color:#F1F1F1;font-size:12px;font-weight:bold;letter-spacing:-0.096px;">Aspetto</span>
<div class="a" style="left:1122px;top:164px;width:128px;height:18px;background:#252526;"></div>
<div class="a" style="left:1251px;top:164px;width:150px;height:18px;background:#252526;"></div>
<div class="a" style="left:1126px;top:164.0px;width:124px;height:18px;overflow:hidden"><span class="a t" style="left:0;top:0;height:18px;line-height:18px;color:#F1F1F1;font-size:12px;letter-spacing:0.107px;">Bitmap</span></div>
<div class="a" style="left:1254.5px;top:164.0px;width:146px;height:18px;overflow:hidden"><span class="a t" style="left:0;top:0;height:18px;line-height:18px;color:#F1F1F1;font-size:12px;letter-spacing:-0.709px;">False</span></div>
<div class="a" style="left:1122px;top:183px;width:128px;height:18px;background:#3399FF;"></div>
<div class="a" style="left:1251px;top:183px;width:150px;height:18px;background:#252526;"></div>
<div class="a" style="left:1126px;top:183.0px;width:124px;height:18px;overflow:hidden"><span class="a t" style="left:0;top:0;height:18px;line-height:18px;color:#FFFFFF;font-size:12px;letter-spacing:0.018px;">Caption</span></div>
<div class="a" style="left:1254.5px;top:183.0px;width:146px;height:18px;overflow:hidden"><span class="a t" style="left:0;top:0;height:18px;line-height:18px;color:#F1F1F1;font-size:12px;letter-spacing:-0.134px;">Nuova Cartella</span></div>
<div class="a" style="left:1332.5px;top:186px;width:1px;height:13px;background:#F1F1F1;"></div>
<div class="a" style="left:1122px;top:202px;width:128px;height:18px;background:#252526;"></div>
<div class="a" style="left:1251px;top:202px;width:150px;height:18px;background:#252526;"></div>
<div class="a" style="left:1126px;top:202.0px;width:124px;height:18px;overflow:hidden"><span class="a t" style="left:0;top:0;height:18px;line-height:18px;color:#F1F1F1;font-size:12px;letter-spacing:-0.186px;">Client Edge</span></div>
<div class="a" style="left:1254.5px;top:202.0px;width:146px;height:18px;overflow:hidden"><span class="a t" style="left:0;top:0;height:18px;line-height:18px;color:#F1F1F1;font-size:12px;letter-spacing:-0.709px;">False</span></div>
<div class="a" style="left:1122px;top:221px;width:128px;height:18px;background:#252526;"></div>
<div class="a" style="left:1251px;top:221px;width:150px;height:18px;background:#252526;"></div>
<div class="a" style="left:1126px;top:221.0px;width:124px;height:18px;overflow:hidden"><span class="a t" style="left:0;top:0;height:18px;line-height:18px;color:#F1F1F1;font-size:12px;letter-spacing:-0.379px;">Flat</span></div>
<div class="a" style="left:1254.5px;top:221.0px;width:146px;height:18px;overflow:hidden"><span class="a t" style="left:0;top:0;height:18px;line-height:18px;color:#F1F1F1;font-size:12px;letter-spacing:-0.709px;">False</span></div>
<div class="a" style="left:1122px;top:240px;width:128px;height:18px;background:#252526;"></div>
<div class="a" style="left:1251px;top:240px;width:150px;height:18px;background:#252526;"></div>
<div class="a" style="left:1126px;top:240.0px;width:124px;height:18px;overflow:hidden"><span class="a t" style="left:0;top:0;height:18px;line-height:18px;color:#F1F1F1;font-size:12px;letter-spacing:0.197px;">Horizontal Alignment</span></div>
<div class="a" style="left:1254.5px;top:240.0px;width:146px;height:18px;overflow:hidden"><span class="a t" style="left:0;top:0;height:18px;line-height:18px;color:#F1F1F1;font-size:12px;letter-spacing:-0.033px;">Default</span></div>
<div class="a" style="left:1122px;top:259px;width:128px;height:18px;background:#252526;"></div>
<div class="a" style="left:1251px;top:259px;width:150px;height:18px;background:#252526;"></div>
<div class="a" style="left:1126px;top:259.0px;width:124px;height:18px;overflow:hidden"><span class="a t" style="left:0;top:0;height:18px;line-height:18px;color:#F1F1F1;font-size:12px;letter-spacing:-0.047px;">Icon</span></div>
<div class="a" style="left:1254.5px;top:259.0px;width:146px;height:18px;overflow:hidden"><span class="a t" style="left:0;top:0;height:18px;line-height:18px;color:#F1F1F1;font-size:12px;letter-spacing:-0.709px;">False</span></div>
<div class="a" style="left:1122px;top:278px;width:128px;height:18px;background:#252526;"></div>
<div class="a" style="left:1251px;top:278px;width:150px;height:18px;background:#252526;"></div>
<div class="a" style="left:1126px;top:278.0px;width:124px;height:18px;overflow:hidden"><span class="a t" style="left:0;top:0;height:18px;line-height:18px;color:#F1F1F1;font-size:12px;letter-spacing:-0.062px;">Modal Frame</span></div>
<div class="a" style="left:1254.5px;top:278.0px;width:146px;height:18px;overflow:hidden"><span class="a t" style="left:0;top:0;height:18px;line-height:18px;color:#F1F1F1;font-size:12px;letter-spacing:-0.709px;">False</span></div>
<div class="a" style="left:1122px;top:297px;width:128px;height:18px;background:#252526;"></div>
<div class="a" style="left:1251px;top:297px;width:150px;height:18px;background:#252526;"></div>
<div class="a" style="left:1126px;top:297.0px;width:124px;height:18px;overflow:hidden"><span class="a t" style="left:0;top:0;height:18px;line-height:18px;color:#F1F1F1;font-size:12px;letter-spacing:0.385px;">Notify</span></div>
<div class="a" style="left:1254.5px;top:297.0px;width:146px;height:18px;overflow:hidden"><span class="a t" style="left:0;top:0;height:18px;line-height:18px;color:#F1F1F1;font-size:12px;letter-spacing:-0.709px;">False</span></div>
<div class="a" style="left:1122px;top:316px;width:128px;height:18px;background:#252526;"></div>
<div class="a" style="left:1251px;top:316px;width:150px;height:18px;background:#252526;"></div>
<div class="a" style="left:1126px;top:316.0px;width:124px;height:18px;overflow:hidden"><span class="a t" style="left:0;top:0;height:18px;line-height:18px;color:#F1F1F1;font-size:12px;letter-spacing:0.031px;">Right Align Text</span></div>
<div class="a" style="left:1254.5px;top:316.0px;width:146px;height:18px;overflow:hidden"><span class="a t" style="left:0;top:0;height:18px;line-height:18px;color:#F1F1F1;font-size:12px;letter-spacing:-0.709px;">False</span></div>
<div class="a" style="left:1122px;top:335px;width:128px;height:18px;background:#252526;"></div>
<div class="a" style="left:1251px;top:335px;width:150px;height:18px;background:#252526;"></div>
<div class="a" style="left:1126px;top:335.0px;width:124px;height:18px;overflow:hidden"><span class="a t" style="left:0;top:0;height:18px;line-height:18px;color:#F1F1F1;font-size:12px;letter-spacing:-0.119px;">Right To Left Reading Order</span></div>
<div class="a" style="left:1254.5px;top:335.0px;width:146px;height:18px;overflow:hidden"><span class="a t" style="left:0;top:0;height:18px;line-height:18px;color:#F1F1F1;font-size:12px;letter-spacing:-0.709px;">False</span></div>
<div class="a" style="left:1122px;top:354px;width:128px;height:18px;background:#252526;"></div>
<div class="a" style="left:1251px;top:354px;width:150px;height:18px;background:#252526;"></div>
<div class="a" style="left:1126px;top:354.0px;width:124px;height:18px;overflow:hidden"><span class="a t" style="left:0;top:0;height:18px;line-height:18px;color:#F1F1F1;font-size:12px;letter-spacing:-0.261px;">Static Edge</span></div>
<div class="a" style="left:1254.5px;top:354.0px;width:146px;height:18px;overflow:hidden"><span class="a t" style="left:0;top:0;height:18px;line-height:18px;color:#F1F1F1;font-size:12px;letter-spacing:-0.709px;">False</span></div>
<div class="a" style="left:1122px;top:373px;width:128px;height:18px;background:#252526;"></div>
<div class="a" style="left:1251px;top:373px;width:150px;height:18px;background:#252526;"></div>
<div class="a" style="left:1126px;top:373.0px;width:124px;height:18px;overflow:hidden"><span class="a t" style="left:0;top:0;height:18px;line-height:18px;color:#F1F1F1;font-size:12px;letter-spacing:-0.087px;">Su più righe</span></div>
<div class="a" style="left:1254.5px;top:373.0px;width:146px;height:18px;overflow:hidden"><span class="a t" style="left:0;top:0;height:18px;line-height:18px;color:#F1F1F1;font-size:12px;letter-spacing:-0.709px;">False</span></div>
<div class="a" style="left:1122px;top:392px;width:128px;height:18px;background:#252526;"></div>
<div class="a" style="left:1251px;top:392px;width:150px;height:18px;background:#252526;"></div>
<div class="a" style="left:1126px;top:392.0px;width:124px;height:18px;overflow:hidden"><span class="a t" style="left:0;top:0;height:18px;line-height:18px;color:#F1F1F1;font-size:12px;letter-spacing:-0.297px;">Transparent</span></div>
<div class="a" style="left:1254.5px;top:392.0px;width:146px;height:18px;overflow:hidden"><span class="a t" style="left:0;top:0;height:18px;line-height:18px;color:#F1F1F1;font-size:12px;letter-spacing:-0.709px;">False</span></div>
<div class="a" style="left:1122px;top:411px;width:128px;height:18px;background:#252526;"></div>
<div class="a" style="left:1251px;top:411px;width:150px;height:18px;background:#252526;"></div>
<div class="a" style="left:1126px;top:411.0px;width:124px;height:18px;overflow:hidden"><span class="a t" style="left:0;top:0;height:18px;line-height:18px;color:#F1F1F1;font-size:12px;letter-spacing:0.089px;">Vertical Alignment</span></div>
<div class="a" style="left:1254.5px;top:411.0px;width:146px;height:18px;overflow:hidden"><span class="a t" style="left:0;top:0;height:18px;line-height:18px;color:#F1F1F1;font-size:12px;letter-spacing:-0.033px;">Default</span></div>
<div class="a" style="left:1110px;top:434px;width:9px;height:9px;border:1px solid #E4E4E4;box-sizing:border-box;"></div>
<div class="a" style="left:1112px;top:438px;width:5px;height:1px;background:#E4E4E4;"></div>
<span class="a t" style="left:1126px;top:430.0px;height:18px;line-height:18px;color:#F1F1F1;font-size:12px;font-weight:bold;letter-spacing:-0.052px;">Comportamento</span>
<div class="a" style="left:1122px;top:449px;width:128px;height:18px;background:#252526;"></div>
<div class="a" style="left:1251px;top:449px;width:150px;height:18px;background:#252526;"></div>
<div class="a" style="left:1126px;top:449.0px;width:124px;height:18px;overflow:hidden"><span class="a t" style="left:0;top:0;height:18px;line-height:18px;color:#F1F1F1;font-size:12px;letter-spacing:-0.197px;">Accept Files</span></div>
<div class="a" style="left:1254.5px;top:449.0px;width:146px;height:18px;overflow:hidden"><span class="a t" style="left:0;top:0;height:18px;line-height:18px;color:#F1F1F1;font-size:12px;letter-spacing:-0.709px;">False</span></div>
<div class="a" style="left:1122px;top:468px;width:128px;height:18px;background:#252526;"></div>
<div class="a" style="left:1251px;top:468px;width:150px;height:18px;background:#252526;"></div>
<div class="a" style="left:1126px;top:468.0px;width:124px;height:18px;overflow:hidden"><span class="a t" style="left:0;top:0;height:18px;line-height:18px;color:#F1F1F1;font-size:12px;letter-spacing:0.067px;">Default Button</span></div>
<div class="a" style="left:1254.5px;top:468.0px;width:146px;height:18px;overflow:hidden"><span class="a t" style="left:0;top:0;height:18px;line-height:18px;color:#F1F1F1;font-size:12px;letter-spacing:-0.709px;">False</span></div>
<div class="a" style="left:1122px;top:487px;width:128px;height:18px;background:#252526;"></div>
<div class="a" style="left:1251px;top:487px;width:150px;height:18px;background:#252526;"></div>
<div class="a" style="left:1126px;top:487.0px;width:124px;height:18px;overflow:hidden"><span class="a t" style="left:0;top:0;height:18px;line-height:18px;color:#F1F1F1;font-size:12px;letter-spacing:-0.213px;">Disabled</span></div>
<div class="a" style="left:1254.5px;top:487.0px;width:146px;height:18px;overflow:hidden"><span class="a t" style="left:0;top:0;height:18px;line-height:18px;color:#F1F1F1;font-size:12px;letter-spacing:-0.709px;">False</span></div>
<div class="a" style="left:1122px;top:506px;width:128px;height:18px;background:#252526;"></div>
<div class="a" style="left:1251px;top:506px;width:150px;height:18px;background:#252526;"></div>
<div class="a" style="left:1126px;top:506.0px;width:124px;height:18px;overflow:hidden"><span class="a t" style="left:0;top:0;height:18px;line-height:18px;color:#F1F1F1;font-size:12px;letter-spacing:-0.145px;">Help ID</span></div>
<div class="a" style="left:1254.5px;top:506.0px;width:146px;height:18px;overflow:hidden"><span class="a t" style="left:0;top:0;height:18px;line-height:18px;color:#F1F1F1;font-size:12px;letter-spacing:-0.709px;">False</span></div>
<div class="a" style="left:1122px;top:525px;width:128px;height:18px;background:#252526;"></div>
<div class="a" style="left:1251px;top:525px;width:150px;height:18px;background:#252526;"></div>
<div class="a" style="left:1126px;top:525.0px;width:124px;height:18px;overflow:hidden"><span class="a t" style="left:0;top:0;height:18px;line-height:18px;color:#F1F1F1;font-size:12px;letter-spacing:-0.119px;">Owner Draw</span></div>
<div class="a" style="left:1254.5px;top:525.0px;width:146px;height:18px;overflow:hidden"><span class="a t" style="left:0;top:0;height:18px;line-height:18px;color:#F1F1F1;font-size:12px;letter-spacing:-0.709px;">False</span></div>
<div class="a" style="left:1122px;top:544px;width:128px;height:18px;background:#252526;"></div>
<div class="a" style="left:1251px;top:544px;width:150px;height:18px;background:#252526;"></div>
<div class="a" style="left:1126px;top:544.0px;width:124px;height:18px;overflow:hidden"><span class="a t" style="left:0;top:0;height:18px;line-height:18px;color:#F1F1F1;font-size:12px;letter-spacing:-0.092px;">Visible</span></div>
<div class="a" style="left:1254.5px;top:544.0px;width:146px;height:18px;overflow:hidden"><span class="a t" style="left:0;top:0;height:18px;line-height:18px;color:#F1F1F1;font-size:12px;letter-spacing:-0.559px;">True</span></div>
<div class="a" style="left:1110px;top:567px;width:9px;height:9px;border:1px solid #E4E4E4;box-sizing:border-box;"></div>
<div class="a" style="left:1112px;top:571px;width:5px;height:1px;background:#E4E4E4;"></div>
<span class="a t" style="left:1126px;top:563.0px;height:18px;line-height:18px;color:#F1F1F1;font-size:12px;font-weight:bold;letter-spacing:-0.290px;">Layout dinamico</span>
<div class="a" style="left:1122px;top:582px;width:128px;height:18px;background:#252526;"></div>
<div class="a" style="left:1251px;top:582px;width:150px;height:18px;background:#252526;"></div>
<div class="a" style="left:1126px;top:582.0px;width:124px;height:18px;overflow:hidden"><span class="a t" style="left:0;top:0;height:18px;line-height:18px;color:#F1F1F1;font-size:12px;letter-spacing:0.008px;">Tipo di ridimensionamento</span></div>
<div class="a" style="left:1254.5px;top:582.0px;width:146px;height:18px;overflow:hidden"><span class="a t" style="left:0;top:0;height:18px;line-height:18px;color:#F1F1F1;font-size:12px;letter-spacing:-0.196px;">Nessuno</span></div>
<div class="a" style="left:1122px;top:601px;width:128px;height:18px;background:#252526;"></div>
<div class="a" style="left:1251px;top:601px;width:150px;height:18px;background:#252526;"></div>
<div class="a" style="left:1126px;top:601.0px;width:124px;height:18px;overflow:hidden"><span class="a t" style="left:0;top:0;height:18px;line-height:18px;color:#F1F1F1;font-size:12px;letter-spacing:0.046px;">Tipo di spostamento</span></div>
<div class="a" style="left:1254.5px;top:601.0px;width:146px;height:18px;overflow:hidden"><span class="a t" style="left:0;top:0;height:18px;line-height:18px;color:#F1F1F1;font-size:12px;letter-spacing:-0.196px;">Nessuno</span></div>
<div class="a" style="left:1110px;top:624px;width:9px;height:9px;border:1px solid #E4E4E4;box-sizing:border-box;"></div>
<div class="a" style="left:1112px;top:628px;width:5px;height:1px;background:#E4E4E4;"></div>
<span class="a t" style="left:1126px;top:620.0px;height:18px;line-height:18px;color:#F1F1F1;font-size:12px;font-weight:bold;letter-spacing:-0.041px;">Varie</span>
<div class="a" style="left:1122px;top:639px;width:128px;height:18px;background:#252526;"></div>
<div class="a" style="left:1251px;top:639px;width:150px;height:18px;background:#252526;"></div>
<div class="a" style="left:1126px;top:639.0px;width:124px;height:18px;overflow:hidden"><span class="a t" style="left:0;top:0;height:18px;line-height:18px;color:#808080;font-size:12px;letter-spacing:-0.003px;">(Name)</span></div>
<div class="a" style="left:1254.5px;top:639.0px;width:146px;height:18px;overflow:hidden"><span class="a t" style="left:0;top:0;height:18px;line-height:18px;color:#808080;font-size:11.5px;letter-spacing:-0.713px;">IDD_MAP_CREATE_DIRECTORY</span></div>
<div class="a" style="left:1122px;top:658px;width:128px;height:18px;background:#252526;"></div>
<div class="a" style="left:1251px;top:658px;width:150px;height:18px;background:#252526;"></div>
<div class="a" style="left:1126px;top:658.0px;width:124px;height:18px;overflow:hidden"><span class="a t" style="left:0;top:0;height:18px;line-height:18px;color:#F1F1F1;font-size:12px;letter-spacing:0.028px;">Group</span></div>
<div class="a" style="left:1254.5px;top:658.0px;width:146px;height:18px;overflow:hidden"><span class="a t" style="left:0;top:0;height:18px;line-height:18px;color:#F1F1F1;font-size:12px;letter-spacing:-0.709px;">False</span></div>
<div class="a" style="left:1122px;top:677px;width:128px;height:18px;background:#252526;"></div>
<div class="a" style="left:1251px;top:677px;width:150px;height:18px;background:#252526;"></div>
<div class="a" style="left:1126px;top:677.0px;width:124px;height:18px;overflow:hidden"><span class="a t" style="left:0;top:0;height:18px;line-height:18px;color:#F1F1F1;font-size:12px;letter-spacing:-0.500px;">ID</span></div>
<div class="a" style="left:1254.5px;top:677.0px;width:146px;height:18px;overflow:hidden"><span class="a t" style="left:0;top:0;height:18px;line-height:18px;color:#F1F1F1;font-size:11.5px;letter-spacing:-0.713px;">IDD_MAP_CREATE_DIRECTORY</span></div>
<div class="a" style="left:1122px;top:696px;width:128px;height:18px;background:#252526;"></div>
<div class="a" style="left:1251px;top:696px;width:150px;height:18px;background:#252526;"></div>
<div class="a" style="left:1126px;top:696.0px;width:124px;height:18px;overflow:hidden"><span class="a t" style="left:0;top:0;height:18px;line-height:18px;color:#F1F1F1;font-size:12px;letter-spacing:0.138px;">Tabstop</span></div>
<div class="a" style="left:1254.5px;top:696.0px;width:146px;height:18px;overflow:hidden"><span class="a t" style="left:0;top:0;height:18px;line-height:18px;color:#F1F1F1;font-size:12px;letter-spacing:-0.559px;">True</span></div>
<div class="a" style="left:1107px;top:793px;width:296px;height:1px;background:#333337;"></div>
<span class="a t" style="left:1113px;top:798.5px;height:18px;line-height:18px;color:#F1F1F1;font-size:12px;font-weight:bold;letter-spacing:-0.382px;">Caption</span>
<span class="a t" style="left:1113px;top:817.0px;height:18px;line-height:18px;color:#F1F1F1;font-size:12px;letter-spacing:-0.060px;">Specifica il testo visualizzato sul controllo.</span>
<div class="a" style="left:1107px;top:856px;width:296px;height:1px;background:#3F3F46;"></div>
<div class="a" style="left:1107px;top:93px;width:1px;height:764px;background:#3F3F46;"></div>
<div class="a" style="left:1402px;top:93px;width:1px;height:764px;background:#3F3F46;"></div>
<div class="a" style="left:1401px;top:117px;width:1px;height:739px;background:#2D2D30;"></div>
<div class="a" style="left:1422px;top:70.5px;width:6px;height:48.5px;background:#3F3F46;"></div>
<div class="a" style="left:1417.5px;top:71.0px;width:0;height:0;"><span class="t" style="position:absolute;left:0;top:0;transform-origin:0 0;transform:rotate(90deg);font-size:12px;line-height:14px;color:#D0D0D0;letter-spacing:-0.08px">Proprietà</span></div>
<div class="a" style="left:1422px;top:130.5px;width:6px;height:120.5px;background:#3F3F46;"></div>
<div class="a" style="left:1417.5px;top:131.0px;width:0;height:0;"><span class="t" style="position:absolute;left:0;top:0;transform-origin:0 0;transform:rotate(90deg);font-size:12px;line-height:14px;color:#D0D0D0;letter-spacing:-0.02px">Casella degli strumenti</span></div>
<svg class="a" style="left:1024.5px;top:894.5px;" width="9" height="12" viewBox="0 0 9 12"><path d="M4.5 11.6 V1.6 M0.7 5.4 L4.5 1.4 L8.3 5.4" stroke="#DCDCDC" stroke-width="1.9" fill="none"/></svg>
<span class="a t" style="left:1043px;top:891.0px;height:18px;line-height:18px;color:#FFFFFF;font-size:12px;">0</span>
<svg class="a" style="left:1073.5px;top:893.5px;" width="12" height="12" viewBox="0 0 12 12"><path d="M0.4 11.8 L1.2 8.4 L8.6 0.8 L11.4 3.6 L4 11 Z" fill="#DCDCDC"/><path d="M7.2 2.4 L9.8 5 M2 8 L4.4 10.4" stroke="#007ACC" stroke-width="0.8"/></svg>
<span class="a t" style="left:1093.5px;top:891.0px;height:18px;line-height:18px;color:#FFFFFF;font-size:12px;">1</span>
<svg class="a" style="left:1122px;top:893px;" width="14" height="14" viewBox="0 0 14 14"><path d="M7 0.2 L13.8 7 L7 13.8 L0.2 7 Z" fill="#DCDCDC"/><path d="M5 3.2 L8.8 7 M6.6 4.8 V9.6" stroke="#007ACC" stroke-width="1.1" fill="none"/><circle cx="6.6" cy="10" r="1.1" fill="#007ACC"/><circle cx="9" cy="7.2" r="1.1" fill="#007ACC"/></svg>
<span class="a t" style="left:1143.3px;top:891.0px;height:18px;line-height:18px;color:#FFFFFF;font-size:12px;letter-spacing:-0.166px;">WorldEditorRemixTL</span>
<svg class="a" style="left:1273.5px;top:893.5px;" width="15" height="13" viewBox="0 0 15 13"><path d="M2.2 2.2 L7.4 7.2 V12.5 M12.8 2.2 L7.4 7.2" stroke="#DCDCDC" stroke-width="1.9" fill="none"/><path d="M9.2 0.6 H14.4 V5.8 Z" fill="#DCDCDC"/><path d="M0.6 0.6 H5.6 L0.6 5.6 Z" fill="#DCDCDC"/></svg>
<span class="a t" style="left:1295.8px;top:891.0px;height:18px;line-height:18px;color:#FFFFFF;font-size:12px;letter-spacing:-0.215px;">master</span>
<svg class="a" style="left:1337px;top:898px;" width="8" height="4" viewBox="0 0 8 4"><path d="M0 4 L4 0 L8 4 Z" fill="#FFFFFF"/></svg>
<svg class="a" style="left:1371.5px;top:892.5px;" width="12" height="14" viewBox="0 0 12 14"><path d="M6 0.4 C8.6 0.4 9.8 2.4 9.8 4.8 V8 L11.6 10.6 H0.4 L2.2 8 V4.8 C2.2 2.4 3.4 0.4 6 0.4 Z" fill="#C9CDD2"/><path d="M4.2 11.4 H7.8 C7.8 12.8 7 13.4 6 13.4 C5 13.4 4.2 12.8 4.2 11.4 Z" fill="#C9CDD2"/></svg>
<div class="a" style="left:1380.2px;top:897.2px;width:11.4px;height:11.4px;background:#E51400;border-radius:5.7px;"></div>
<span class="a t" style="left:1383.4px;top:897.0px;height:12px;line-height:12px;color:#FFFFFF;font-size:10.5px;font-weight:bold;">1</span>
<svg class="a" style="left:1416px;top:899px;" width="8" height="8" viewBox="0 0 8 8"><g fill="#66B0E6"><rect x="6" y="0" width="1" height="1"/><rect x="4" y="2" width="1" height="1"/><rect x="6" y="2" width="1" height="1"/><rect x="2" y="4" width="1" height="1"/><rect x="4" y="4" width="1" height="1"/><rect x="6" y="4" width="1" height="1"/><rect x="0" y="6" width="1" height="1"/><rect x="2" y="6" width="1" height="1"/><rect x="4" y="6" width="1" height="1"/><rect x="6" y="6" width="1" height="1"/></g></svg>
</body></html>
